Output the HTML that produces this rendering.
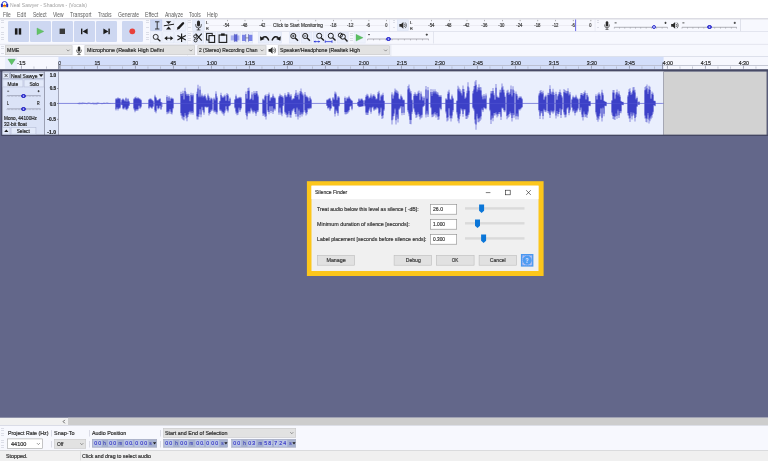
<!DOCTYPE html>
<html lang="en"><head><meta charset="utf-8"><title>Neal Sawyer - Shadows - (Vocals)</title>
<style>
html,body{margin:0;padding:0;}
body{width:768px;height:461px;overflow:hidden;background:#63678a;position:relative;font-family:"Liberation Sans",sans-serif;}
#app{position:absolute;left:0;top:0;width:768px;height:461px;overflow:hidden;will-change:transform;}
.b{position:absolute;box-sizing:border-box;}
.t{position:absolute;white-space:nowrap;display:block;-webkit-text-stroke:0.18px currentColor;}
.ns{-webkit-text-stroke:0;}
svg{position:absolute;left:0;top:0;overflow:visible;}
</style></head><body><div id="app">
<header id="titlebar-menubar">
<svg width="768" height="461" viewBox="0 0 768 461"><rect x="0.00" y="0.00" width="768.00" height="18.70" fill="#ffffff"/></svg>
<svg width="768" height="461" viewBox="0 0 768 461">
<g id="appicon">
<path d="M1.9 5.2 V4.2 A2.65 2.65 0 0 1 7.2 4.2 V5.2" fill="none" stroke="#2a3ad0" stroke-width="1.0"/>
<rect x="0.9" y="3.7" width="2.0" height="3.6" rx="0.8" fill="#1f2fc4"/>
<rect x="6.2" y="3.7" width="2.0" height="3.6" rx="0.8" fill="#1f2fc4"/>
<path d="M3 7 L3.4 4.4 L3.9 5 L4.5 2.9 L5.2 5 L5.7 4.4 L6.1 7 Z" fill="#ffd51e"/>
<rect x="3.1" y="5.0" width="2.9" height="0.9" fill="#e53a24"/>
<path d="M3.1 6.2 H6 L5.6 7.2 H3.5 Z" fill="#f59a1c"/>
</g></svg>
<span class="t ns" style="left:10.20px;top:1.95px;font-size:6px;line-height:6.90px;color:#a2a2a2;transform:scaleX(0.846);transform-origin:left center;">Neal Sawyer - Shadows - (Vocals)</span>
<span class="t ns" style="left:3.20px;top:10.76px;font-size:6.5px;line-height:7.47px;color:#5a5a5a;transform:scaleX(0.745);transform-origin:left center;">File</span>
<span class="t ns" style="left:17.00px;top:10.76px;font-size:6.5px;line-height:7.47px;color:#5a5a5a;transform:scaleX(0.804);transform-origin:left center;">Edit</span>
<span class="t ns" style="left:32.50px;top:10.76px;font-size:6.5px;line-height:7.47px;color:#5a5a5a;transform:scaleX(0.747);transform-origin:left center;">Select</span>
<span class="t ns" style="left:52.50px;top:10.76px;font-size:6.5px;line-height:7.47px;color:#5a5a5a;transform:scaleX(0.752);transform-origin:left center;">View</span>
<span class="t ns" style="left:69.50px;top:10.76px;font-size:6.5px;line-height:7.47px;color:#5a5a5a;transform:scaleX(0.780);transform-origin:left center;">Transport</span>
<span class="t ns" style="left:97.50px;top:10.76px;font-size:6.5px;line-height:7.47px;color:#5a5a5a;transform:scaleX(0.701);transform-origin:left center;">Tracks</span>
<span class="t ns" style="left:118.00px;top:10.76px;font-size:6.5px;line-height:7.47px;color:#5a5a5a;transform:scaleX(0.775);transform-origin:left center;">Generate</span>
<span class="t ns" style="left:145.00px;top:10.76px;font-size:6.5px;line-height:7.47px;color:#5a5a5a;transform:scaleX(0.806);transform-origin:left center;">Effect</span>
<span class="t ns" style="left:164.50px;top:10.76px;font-size:6.5px;line-height:7.47px;color:#5a5a5a;transform:scaleX(0.778);transform-origin:left center;">Analyze</span>
<span class="t ns" style="left:189.00px;top:10.76px;font-size:6.5px;line-height:7.47px;color:#5a5a5a;transform:scaleX(0.771);transform-origin:left center;">Tools</span>
<span class="t ns" style="left:207.00px;top:10.76px;font-size:6.5px;line-height:7.47px;color:#5a5a5a;transform:scaleX(0.800);transform-origin:left center;">Help</span>
</header>
<section id="transport-toolbar">
<svg width="768" height="461" viewBox="0 0 768 461"><rect x="0.00" y="18.60" width="768.00" height="38.10" fill="#f7f8fe"/><rect x="0.00" y="18.60" width="768.00" height="0.80" fill="#d8d8dd"/></svg>
<div class="b " style="left:0.00px;top:31.10px;width:768.00px;height:0.60px;background:#e3e5ef;left:188px;width:580px;"></div>
<svg width="768" height="461" viewBox="0 0 768 461"><rect x="0.00" y="43.90" width="768.00" height="0.70" fill="#dcdee8"/><rect x="0.00" y="56.20" width="768.00" height="0.60" fill="#d9dcea"/></svg>
<div class="b" style="left:1.4px;top:20px;width:2.6px;height:22px;background:repeating-linear-gradient(180deg,#c4c7d4 0 0.7px,transparent 0.7px 2.4px);opacity:.55"></div>
<div class="b " style="left:8.00px;top:21.00px;width:20.50px;height:20.60px;background:#cdd7f1;border-radius:1.2px;"></div>
<div class="b " style="left:30.00px;top:21.00px;width:20.50px;height:20.60px;background:#cdd7f1;border-radius:1.2px;"></div>
<div class="b " style="left:52.00px;top:21.00px;width:20.50px;height:20.60px;background:#cdd7f1;border-radius:1.2px;"></div>
<div class="b " style="left:74.00px;top:21.00px;width:20.50px;height:20.60px;background:#cdd7f1;border-radius:1.2px;"></div>
<div class="b " style="left:96.20px;top:21.00px;width:20.70px;height:20.60px;background:#cdd7f1;border-radius:1.2px;"></div>
<div class="b " style="left:122.00px;top:21.00px;width:20.80px;height:20.60px;background:#cdd7f1;border-radius:1.2px;"></div>
<svg width="768" height="461" viewBox="0 0 768 461">
<rect x="14.9" y="28.3" width="2.6" height="6.3" fill="#1b1b1b"/><rect x="18.7" y="28.3" width="2.5" height="6.3" fill="#1b1b1b"/>
<path d="M37 28 L43.8 31.4 L37 34.8 Z" fill="#64c468" stroke="#56ad5c" stroke-width="0.4"/>
<rect x="59.6" y="28.6" width="5.4" height="5.4" fill="#3a3a3a"/>
<rect x="81" y="28.6" width="1.4" height="5.6" fill="#1b1b1b"/><path d="M87.6 28.6 L82.6 31.4 L87.6 34.2 Z" fill="#1b1b1b"/>
<rect x="108.4" y="28.6" width="1.4" height="5.6" fill="#1b1b1b"/><path d="M103.4 28.6 L108.4 31.4 L103.4 34.2 Z" fill="#1b1b1b"/>
<circle cx="132.3" cy="31.3" r="2.9" fill="#e8403a"/></svg>
</section>
<section id="tools-toolbar">
<div class="b" style="left:146.3px;top:20px;width:2.6px;height:22px;background:repeating-linear-gradient(180deg,#c4c7d4 0 0.7px,transparent 0.7px 2.4px);opacity:.55"></div>
<svg width="768" height="461" viewBox="0 0 768 461"><rect x="150.65" y="19.85" width="11.30" height="10.70" fill="#ccd8f3" stroke="#b7c4e6" stroke-width="0.5"/><rect x="162.85" y="19.85" width="11.00" height="10.70" fill="#eef2fc" stroke="#dde3f3" stroke-width="0.5"/><rect x="174.75" y="19.85" width="11.20" height="10.70" fill="#eef2fc" stroke="#dde3f3" stroke-width="0.5"/><rect x="150.65" y="31.75" width="11.30" height="11.20" fill="#eef2fc" stroke="#dde3f3" stroke-width="0.5"/><rect x="162.85" y="31.75" width="11.00" height="11.20" fill="#eef2fc" stroke="#dde3f3" stroke-width="0.5"/><rect x="174.75" y="31.75" width="11.20" height="11.20" fill="#eef2fc" stroke="#dde3f3" stroke-width="0.5"/></svg>
<svg width="768" height="461" viewBox="0 0 768 461">
<path d="M155 21.8 H159.4 M157.2 21.8 V29 M155 29 H159.4" stroke="#1b1b1b" stroke-width="0.85" fill="none"/>
<path d="M163.8 25.8 L174 24.2" stroke="#1b1b1b" stroke-width="1.0" fill="none"/><path d="M166 21.2 H171.3 L168.6 23.9 Z" fill="#1b1b1b"/><path d="M166 29.5 H171.3 L168.6 26.4 Z" fill="#1b1b1b"/>
<path d="M176.8 29.8 L177.6 27.2 L182.2 22.4 L183.4 21.9 L184.3 23 L183.9 24.1 L179.3 28.9 Z" fill="#1b1b1b"/>
<circle cx="155.7" cy="36.9" r="2.5" fill="none" stroke="#1b1b1b" stroke-width="0.9"/><path d="M157.5 38.7 L160.4 41.2" stroke="#1b1b1b" stroke-width="1.3"/>
<path d="M166 38.2 H171.6" stroke="#1b1b1b" stroke-width="1.0"/><path d="M167.2 36 L164.3 38.2 L167.2 40.4 Z M170.4 36 L173.3 38.2 L170.4 40.4 Z" fill="#1b1b1b"/>
<path d="M181.6 33.5 V42 M177.4 35.6 L185.8 39.9 M185.8 35.6 L177.4 39.9" stroke="#1b1b1b" stroke-width="1.15"/></svg>
<svg width="768" height="461" viewBox="0 0 768 461"><rect x="187.20" y="19.00" width="0.50" height="37.50" fill="#dfe2ee"/></svg>
</section>
<section id="record-meter-toolbar">
<div class="b" style="left:188.4px;top:20px;width:2.6px;height:10.5px;background:repeating-linear-gradient(180deg,#c4c7d4 0 0.7px,transparent 0.7px 2.4px);opacity:.55"></div>
<svg width="768" height="461" viewBox="0 0 768 461"><rect x="192.75" y="19.85" width="11.50" height="10.70" fill="#e7edfb" stroke="#d8dff2" stroke-width="0.5"/></svg>
<svg width="768" height="461" viewBox="0 0 768 461"><g transform="translate(198.5,25.2) scale(1.12)"><rect x="-1.35" y="-4.3" width="2.7" height="5.4" rx="1.35" fill="#2a2a2a"/><path d="M-2.5 -0.9 V0 A2.5 2.5 0 0 0 2.5 0 V-0.9" fill="none" stroke="#2a2a2a" stroke-width="0.7"/><path d="M0 2.5 V4.2 M-1.6 4.2 H1.6" stroke="#2a2a2a" stroke-width="0.7"/></g></svg>
<span class="t " style="left:205.60px;top:19.87px;font-size:4.4px;line-height:5.06px;color:#333;transform:scaleX(0.981);transform-origin:left center;">L</span>
<span class="t " style="left:205.60px;top:25.67px;font-size:4.4px;line-height:5.06px;color:#333;transform:scaleX(0.850);transform-origin:left center;">R</span>
<svg width="768" height="461" viewBox="0 0 768 461"><rect x="209.00" y="25.20" width="178.00" height="0.60" fill="#e4e5ec"/><rect x="227.00" y="19.90" width="0.60" height="1.30" fill="#7a7a7a"/></svg>
<span class="t " style="left:223.38px;top:22.96px;font-size:4.6px;line-height:5.29px;color:#3a3a3a;transform:scaleX(0.903);transform-origin:center center;">-54</span>
<svg width="768" height="461" viewBox="0 0 768 461"><rect x="244.70" y="19.90" width="0.60" height="1.30" fill="#7a7a7a"/></svg>
<span class="t " style="left:241.08px;top:22.96px;font-size:4.6px;line-height:5.29px;color:#3a3a3a;transform:scaleX(0.903);transform-origin:center center;">-48</span>
<svg width="768" height="461" viewBox="0 0 768 461"><rect x="262.40" y="19.90" width="0.60" height="1.30" fill="#7a7a7a"/></svg>
<span class="t " style="left:258.78px;top:22.96px;font-size:4.6px;line-height:5.29px;color:#3a3a3a;transform:scaleX(0.903);transform-origin:center center;">-42</span>
<svg width="768" height="461" viewBox="0 0 768 461"><rect x="280.10" y="19.90" width="0.60" height="1.30" fill="#7a7a7a"/><rect x="297.80" y="19.90" width="0.60" height="1.30" fill="#7a7a7a"/><rect x="315.50" y="19.90" width="0.60" height="1.30" fill="#7a7a7a"/><rect x="333.20" y="19.90" width="0.60" height="1.30" fill="#7a7a7a"/></svg>
<span class="t " style="left:329.58px;top:22.96px;font-size:4.6px;line-height:5.29px;color:#3a3a3a;transform:scaleX(0.963);transform-origin:center center;">-18</span>
<svg width="768" height="461" viewBox="0 0 768 461"><rect x="350.90" y="19.90" width="0.60" height="1.30" fill="#7a7a7a"/></svg>
<span class="t " style="left:347.28px;top:22.96px;font-size:4.6px;line-height:5.29px;color:#3a3a3a;transform:scaleX(0.963);transform-origin:center center;">-12</span>
<svg width="768" height="461" viewBox="0 0 768 461"><rect x="368.60" y="19.90" width="0.60" height="1.30" fill="#7a7a7a"/></svg>
<span class="t " style="left:366.26px;top:22.96px;font-size:4.6px;line-height:5.29px;color:#3a3a3a;transform:scaleX(0.929);transform-origin:center center;">-6</span>
<svg width="768" height="461" viewBox="0 0 768 461"><rect x="386.30" y="19.90" width="0.60" height="1.30" fill="#7a7a7a"/></svg>
<span class="t " style="left:384.92px;top:22.96px;font-size:4.6px;line-height:5.29px;color:#3a3a3a;transform:scaleX(0.860);transform-origin:center center;">0</span>
<svg width="768" height="461" viewBox="0 0 768 461"><rect x="271.50" y="23.00" width="53.00" height="5.00" fill="#f7f8fe"/></svg>
<span class="t " style="left:273.00px;top:22.74px;font-size:4.8px;line-height:5.52px;color:#3c3c3c;transform:scaleX(0.981);transform-origin:left center;">Click to Start Monitoring</span>
<svg width="768" height="461" viewBox="0 0 768 461"><rect x="389.40" y="19.00" width="0.50" height="12.00" fill="#dfe2ee"/></svg>
</section>
<section id="playback-meter-toolbar">
<div class="b" style="left:392.6px;top:20px;width:2.6px;height:10.5px;background:repeating-linear-gradient(180deg,#c4c7d4 0 0.7px,transparent 0.7px 2.4px);opacity:.55"></div>
<svg width="768" height="461" viewBox="0 0 768 461"><rect x="397.25" y="19.85" width="11.10" height="10.70" fill="#e7edfb" stroke="#d8dff2" stroke-width="0.5"/></svg>
<svg width="768" height="461" viewBox="0 0 768 461"><g transform="translate(402.8,25.3) scale(0.95)"><path d="M-3.6 -1.4 H-1.8 L0.6 -3.6 V3.6 L-1.8 1.4 H-3.6 Z" fill="#2a2a2a"/><path d="M1.6 -1.7 A2.4 2.4 0 0 1 1.6 1.7" fill="none" stroke="#2a2a2a" stroke-width="0.7"/><path d="M2.5 -3 A4.2 4.2 0 0 1 2.5 3" fill="none" stroke="#2a2a2a" stroke-width="0.7"/></g></svg>
<span class="t " style="left:410.00px;top:19.87px;font-size:4.4px;line-height:5.06px;color:#333;transform:scaleX(0.981);transform-origin:left center;">L</span>
<span class="t " style="left:410.00px;top:25.67px;font-size:4.4px;line-height:5.06px;color:#333;transform:scaleX(0.850);transform-origin:left center;">R</span>
<svg width="768" height="461" viewBox="0 0 768 461"><rect x="414.00" y="25.20" width="178.00" height="0.60" fill="#e4e5ec"/><rect x="431.30" y="19.90" width="0.60" height="1.30" fill="#7a7a7a"/></svg>
<span class="t " style="left:427.68px;top:22.96px;font-size:4.6px;line-height:5.29px;color:#3a3a3a;transform:scaleX(0.933);transform-origin:center center;">-54</span>
<svg width="768" height="461" viewBox="0 0 768 461"><rect x="449.00" y="19.90" width="0.60" height="1.30" fill="#7a7a7a"/></svg>
<span class="t " style="left:445.38px;top:22.96px;font-size:4.6px;line-height:5.29px;color:#3a3a3a;transform:scaleX(0.933);transform-origin:center center;">-48</span>
<svg width="768" height="461" viewBox="0 0 768 461"><rect x="466.70" y="19.90" width="0.60" height="1.30" fill="#7a7a7a"/></svg>
<span class="t " style="left:463.08px;top:22.96px;font-size:4.6px;line-height:5.29px;color:#3a3a3a;transform:scaleX(0.933);transform-origin:center center;">-42</span>
<svg width="768" height="461" viewBox="0 0 768 461"><rect x="484.40" y="19.90" width="0.60" height="1.30" fill="#7a7a7a"/></svg>
<span class="t " style="left:480.78px;top:22.96px;font-size:4.6px;line-height:5.29px;color:#3a3a3a;transform:scaleX(0.933);transform-origin:center center;">-36</span>
<svg width="768" height="461" viewBox="0 0 768 461"><rect x="502.10" y="19.90" width="0.60" height="1.30" fill="#7a7a7a"/></svg>
<span class="t " style="left:498.48px;top:22.96px;font-size:4.6px;line-height:5.29px;color:#3a3a3a;transform:scaleX(0.933);transform-origin:center center;">-30</span>
<svg width="768" height="461" viewBox="0 0 768 461"><rect x="519.80" y="19.90" width="0.60" height="1.30" fill="#7a7a7a"/></svg>
<span class="t " style="left:516.18px;top:22.96px;font-size:4.6px;line-height:5.29px;color:#3a3a3a;transform:scaleX(0.933);transform-origin:center center;">-24</span>
<svg width="768" height="461" viewBox="0 0 768 461"><rect x="537.50" y="19.90" width="0.60" height="1.30" fill="#7a7a7a"/></svg>
<span class="t " style="left:533.88px;top:22.96px;font-size:4.6px;line-height:5.29px;color:#3a3a3a;transform:scaleX(0.933);transform-origin:center center;">-18</span>
<svg width="768" height="461" viewBox="0 0 768 461"><rect x="555.20" y="19.90" width="0.60" height="1.30" fill="#7a7a7a"/></svg>
<span class="t " style="left:551.58px;top:22.96px;font-size:4.6px;line-height:5.29px;color:#3a3a3a;transform:scaleX(0.933);transform-origin:center center;">-12</span>
<svg width="768" height="461" viewBox="0 0 768 461"><rect x="572.90" y="19.90" width="0.60" height="1.30" fill="#7a7a7a"/></svg>
<span class="t " style="left:570.56px;top:22.96px;font-size:4.6px;line-height:5.29px;color:#3a3a3a;transform:scaleX(0.929);transform-origin:center center;">-6</span>
<svg width="768" height="461" viewBox="0 0 768 461"><rect x="590.60" y="19.90" width="0.60" height="1.30" fill="#7a7a7a"/></svg>
<span class="t " style="left:589.22px;top:22.96px;font-size:4.6px;line-height:5.29px;color:#3a3a3a;transform:scaleX(0.860);transform-origin:center center;">0</span>
<svg width="768" height="461" viewBox="0 0 768 461"><rect x="575.20" y="19.50" width="0.90" height="11.60" fill="#5a5ae6"/><rect x="594.80" y="19.00" width="0.50" height="12.00" fill="#dfe2ee"/></svg>
</section>
<section id="mixer-toolbar">
<div class="b" style="left:596.6px;top:20px;width:2.6px;height:10.5px;background:repeating-linear-gradient(180deg,#c4c7d4 0 0.7px,transparent 0.7px 2.4px);opacity:.55"></div>
<svg width="768" height="461" viewBox="0 0 768 461"><g transform="translate(607,25.4) scale(0.95)"><rect x="-1.35" y="-4.3" width="2.7" height="5.4" rx="1.35" fill="#2a2a2a"/><path d="M-2.5 -0.9 V0 A2.5 2.5 0 0 0 2.5 0 V-0.9" fill="none" stroke="#2a2a2a" stroke-width="0.7"/><path d="M0 2.5 V4.2 M-1.6 4.2 H1.6" stroke="#2a2a2a" stroke-width="0.7"/></g><g transform="translate(674.6,25.4) scale(0.95)"><path d="M-3.6 -1.4 H-1.8 L0.6 -3.6 V3.6 L-1.8 1.4 H-3.6 Z" fill="#2a2a2a"/><path d="M1.6 -1.7 A2.4 2.4 0 0 1 1.6 1.7" fill="none" stroke="#2a2a2a" stroke-width="0.7"/><path d="M2.5 -3 A4.2 4.2 0 0 1 2.5 3" fill="none" stroke="#2a2a2a" stroke-width="0.7"/></g></svg>
<svg width="768" height="461" viewBox="0 0 768 461"><rect x="614.20" y="26.85" width="53.20" height="0.70" fill="#93939b"/><rect x="613.90" y="27.20" width="0.60" height="1.40" fill="#9a9aa2"/><rect x="619.22" y="27.20" width="0.60" height="1.40" fill="#9a9aa2"/><rect x="624.54" y="27.20" width="0.60" height="1.40" fill="#9a9aa2"/><rect x="629.86" y="27.20" width="0.60" height="1.40" fill="#9a9aa2"/><rect x="635.18" y="27.20" width="0.60" height="1.40" fill="#9a9aa2"/><rect x="640.50" y="27.20" width="0.60" height="1.40" fill="#9a9aa2"/><rect x="645.82" y="27.20" width="0.60" height="1.40" fill="#9a9aa2"/><rect x="651.14" y="27.20" width="0.60" height="1.40" fill="#9a9aa2"/><rect x="656.46" y="27.20" width="0.60" height="1.40" fill="#9a9aa2"/><rect x="661.78" y="27.20" width="0.60" height="1.40" fill="#9a9aa2"/><rect x="667.10" y="27.20" width="0.60" height="1.40" fill="#9a9aa2"/><rect x="614.60" y="22.50" width="2.00" height="0.80" fill="#2a2a2a"/><rect x="664.40" y="22.50" width="2.20" height="0.80" fill="#2a2a2a"/><rect x="665.10" y="21.80" width="0.80" height="2.20" fill="#2a2a2a"/></svg>
<div class="b" style="left:651.8px;top:25.0px;width:4.4px;height:4.4px;border-radius:50%;background:#4a4ae2;border:0.5px solid #3a3ad0"></div>
<div class="b" style="left:653.2px;top:26.4px;width:1.6px;height:1.6px;border-radius:50%;background:#a8aef4"></div>
<svg width="768" height="461" viewBox="0 0 768 461"><rect x="682.00" y="26.85" width="54.70" height="0.70" fill="#93939b"/><rect x="681.70" y="27.20" width="0.60" height="1.40" fill="#9a9aa2"/><rect x="687.17" y="27.20" width="0.60" height="1.40" fill="#9a9aa2"/><rect x="692.64" y="27.20" width="0.60" height="1.40" fill="#9a9aa2"/><rect x="698.11" y="27.20" width="0.60" height="1.40" fill="#9a9aa2"/><rect x="703.58" y="27.20" width="0.60" height="1.40" fill="#9a9aa2"/><rect x="709.05" y="27.20" width="0.60" height="1.40" fill="#9a9aa2"/><rect x="714.52" y="27.20" width="0.60" height="1.40" fill="#9a9aa2"/><rect x="719.99" y="27.20" width="0.60" height="1.40" fill="#9a9aa2"/><rect x="725.46" y="27.20" width="0.60" height="1.40" fill="#9a9aa2"/><rect x="730.93" y="27.20" width="0.60" height="1.40" fill="#9a9aa2"/><rect x="736.40" y="27.20" width="0.60" height="1.40" fill="#9a9aa2"/><rect x="682.40" y="22.50" width="2.00" height="0.80" fill="#2a2a2a"/><rect x="733.70" y="22.50" width="2.20" height="0.80" fill="#2a2a2a"/><rect x="734.40" y="21.80" width="0.80" height="2.20" fill="#2a2a2a"/></svg>
<div class="b" style="left:707.1999999999999px;top:25.0px;width:4.4px;height:4.4px;border-radius:50%;background:#4a4ae2;border:0.5px solid #3a3ad0"></div>
<div class="b" style="left:708.6px;top:26.4px;width:1.6px;height:1.6px;border-radius:50%;background:#a8aef4"></div>
<svg width="768" height="461" viewBox="0 0 768 461"><rect x="740.00" y="19.00" width="0.60" height="12.20" fill="#cfd2de"/></svg>
</section>
<section id="edit-toolbar">
<div class="b" style="left:188.4px;top:32.6px;width:2.6px;height:10px;background:repeating-linear-gradient(180deg,#c4c7d4 0 0.7px,transparent 0.7px 2.4px);opacity:.55"></div>
<svg width="768" height="461" viewBox="0 0 768 461"><rect x="354.05" y="32.05" width="11.10" height="11.00" fill="#eef2fc" stroke="#e0e6f5" stroke-width="0.5"/><rect x="193.05" y="32.05" width="10.70" height="11.00" fill="#e9eefb" stroke="#dbe2f3" stroke-width="0.5"/><rect x="205.25" y="32.05" width="10.70" height="11.00" fill="#e9eefb" stroke="#dbe2f3" stroke-width="0.5"/><rect x="217.45" y="32.05" width="10.70" height="11.00" fill="#e9eefb" stroke="#dbe2f3" stroke-width="0.5"/><rect x="229.85" y="32.05" width="10.70" height="11.00" fill="#e9eefb" stroke="#dbe2f3" stroke-width="0.5"/><rect x="242.05" y="32.05" width="10.70" height="11.00" fill="#e9eefb" stroke="#dbe2f3" stroke-width="0.5"/><rect x="258.25" y="32.05" width="10.90" height="11.00" fill="#e9eefb" stroke="#dbe2f3" stroke-width="0.5"/><rect x="270.65" y="32.05" width="10.90" height="11.00" fill="#e9eefb" stroke="#dbe2f3" stroke-width="0.5"/><rect x="289.45" y="32.05" width="10.50" height="11.00" fill="#e9eefb" stroke="#dbe2f3" stroke-width="0.5"/><rect x="301.25" y="32.05" width="10.70" height="11.00" fill="#e9eefb" stroke="#dbe2f3" stroke-width="0.5"/><rect x="313.25" y="32.05" width="10.70" height="11.00" fill="#e9eefb" stroke="#dbe2f3" stroke-width="0.5"/><rect x="325.25" y="32.05" width="10.70" height="11.00" fill="#e9eefb" stroke="#dbe2f3" stroke-width="0.5"/><rect x="337.25" y="32.05" width="10.90" height="11.00" fill="#e9eefb" stroke="#dbe2f3" stroke-width="0.5"/></svg>
<svg width="768" height="461" viewBox="0 0 768 461">
<path d="M195.6 33.6 L201.8 40.6 M201.8 33.6 L196.8 39.2" stroke="#1b1b1b" stroke-width="1.1"/><circle cx="195.6" cy="40.4" r="1.5" fill="none" stroke="#1b1b1b" stroke-width="0.9"/><circle cx="195.2" cy="36.4" r="1.5" fill="none" stroke="#1b1b1b" stroke-width="0.9"/>
<rect x="206.6" y="33.4" width="5.6" height="6.6" fill="none" stroke="#1b1b1b" stroke-width="1.0"/><rect x="209" y="35.6" width="5.6" height="6.8" fill="#e9eefb" stroke="#1b1b1b" stroke-width="1.1"/>
<rect x="219.1" y="35" width="7.6" height="7.4" fill="none" stroke="#1b1b1b" stroke-width="1.1"/><rect x="221.1" y="33.4" width="3.6" height="2.2" fill="#1b1b1b"/>
<rect x="230.8" y="35.4" width="8.6" height="5" fill="#98a1ee" opacity=".8"/><rect x="234.4" y="34.4" width="2.6" height="7" fill="#5a64de"/><path d="M234.4 33.8 V42 M237 33.8 V42" stroke="#3a3f9a" stroke-width="0.5"/>
<rect x="242" y="34.8" width="3.6" height="6.2" fill="#7a84e8"/><rect x="248.6" y="34.8" width="3.8" height="6.2" fill="#7a84e8"/><path d="M245.6 37.9 H248.6" stroke="#444" stroke-width="0.5"/><path d="M245.7 34 V41.8 M248.5 34 V41.8" stroke="#3a3f9a" stroke-width="0.5"/>
<path d="M262 38.8 C263.4 36 267 35.6 268.8 40.4" fill="none" stroke="#1b1b1b" stroke-width="1.35"/><path d="M260 36.2 L260.4 40.8 L264.6 39 Z" fill="#1b1b1b"/>
<path d="M278.8 38.8 C277.4 36 273.8 35.6 272 40.4" fill="none" stroke="#1b1b1b" stroke-width="1.35"/><path d="M280.8 36.2 L280.4 40.8 L276.2 39 Z" fill="#1b1b1b"/>
<circle cx="293.3" cy="36" r="2.55" fill="none" stroke="#1b1b1b" stroke-width="1.0"/><path d="M295.2 37.9 L298.0 40.8" stroke="#1b1b1b" stroke-width="1.4"/><path d="M292 36 H294.6 M293.3 34.7 V37.3" stroke="#1b1b1b" stroke-width="0.7"/>
<circle cx="305.2" cy="36" r="2.55" fill="none" stroke="#1b1b1b" stroke-width="1.0"/><path d="M307.09999999999997 37.9 L309.9 40.8" stroke="#1b1b1b" stroke-width="1.4"/><path d="M303.9 36 H306.5" stroke="#1b1b1b" stroke-width="0.7"/>
<circle cx="319.2" cy="35.8" r="2.55" fill="none" stroke="#1b1b1b" stroke-width="1.0"/><path d="M321.09999999999997 37.699999999999996 L323.9 40.599999999999994" stroke="#1b1b1b" stroke-width="1.4"/><path d="M314.2 41.6 H319.4" stroke="#2b35d8" stroke-width="0.8"/><path d="M315.4 40.5 L313.6 41.6 L315.4 42.7 Z M318.4 40.5 L320.2 41.6 L318.4 42.7 Z" fill="#2b35d8"/>
<circle cx="330.8" cy="35.8" r="2.55" fill="none" stroke="#1b1b1b" stroke-width="1.0"/><path d="M332.7 37.699999999999996 L335.5 40.599999999999994" stroke="#1b1b1b" stroke-width="1.4"/><path d="M325.2 41.6 H332 M325.2 40.3 V42.9 M332 40.3 V42.9" stroke="#2b35d8" stroke-width="0.8"/>
<circle cx="342.8" cy="36.6" r="2.55" fill="none" stroke="#1b1b1b" stroke-width="1.0"/><path d="M344.7 38.5 L347.5 41.4" stroke="#1b1b1b" stroke-width="1.4"/><circle cx="340.4" cy="35.2" r="2.1" fill="none" stroke="#1b1b1b" stroke-width="0.9"/>
<path d="M356 34.3 L363.1 37.7 L356 41.1 Z" fill="#5bbf62" stroke="#46a550" stroke-width="0.3"/></svg>
<div class="b" style="left:350.4px;top:32.6px;width:2.6px;height:10px;background:repeating-linear-gradient(180deg,#c4c7d4 0 0.7px,transparent 0.7px 2.4px);opacity:.55"></div>
<svg width="768" height="461" viewBox="0 0 768 461"><rect x="367.60" y="38.65" width="61.10" height="0.70" fill="#93939b"/><rect x="367.30" y="39.00" width="0.60" height="1.40" fill="#9a9aa2"/><rect x="373.41" y="39.00" width="0.60" height="1.40" fill="#9a9aa2"/><rect x="379.52" y="39.00" width="0.60" height="1.40" fill="#9a9aa2"/><rect x="385.63" y="39.00" width="0.60" height="1.40" fill="#9a9aa2"/><rect x="391.74" y="39.00" width="0.60" height="1.40" fill="#9a9aa2"/><rect x="397.85" y="39.00" width="0.60" height="1.40" fill="#9a9aa2"/><rect x="403.96" y="39.00" width="0.60" height="1.40" fill="#9a9aa2"/><rect x="410.07" y="39.00" width="0.60" height="1.40" fill="#9a9aa2"/><rect x="416.18" y="39.00" width="0.60" height="1.40" fill="#9a9aa2"/><rect x="422.29" y="39.00" width="0.60" height="1.40" fill="#9a9aa2"/><rect x="428.40" y="39.00" width="0.60" height="1.40" fill="#9a9aa2"/><rect x="368.00" y="34.30" width="2.00" height="0.80" fill="#2a2a2a"/><rect x="425.70" y="34.30" width="2.20" height="0.80" fill="#2a2a2a"/><rect x="426.40" y="33.60" width="0.80" height="2.20" fill="#2a2a2a"/></svg>
<div class="b" style="left:386.3px;top:36.8px;width:4.4px;height:4.4px;border-radius:50%;background:#4a4ae2;border:0.5px solid #3a3ad0"></div>
<div class="b" style="left:387.7px;top:38.2px;width:1.6px;height:1.6px;border-radius:50%;background:#a8aef4"></div>
<svg width="768" height="461" viewBox="0 0 768 461"><rect x="433.00" y="31.50" width="0.60" height="12.00" fill="#d6d9e5"/></svg>
</section>
<section id="device-toolbar">
<div class="b" style="left:1.4px;top:45.6px;width:2.6px;height:9.6px;background:repeating-linear-gradient(180deg,#c4c7d4 0 0.7px,transparent 0.7px 2.4px);opacity:.55"></div>
<svg width="768" height="461" viewBox="0 0 768 461"><rect x="5.30" y="45.70" width="66.80" height="9.00" fill="#e2e2e2" stroke="#c6c6c6" stroke-width="0.6"/></svg>
<span class="t " style="left:7.20px;top:47.08px;font-size:5.6px;line-height:6.44px;color:#2a2a2a;transform:scaleX(0.941);transform-origin:left center;">MME</span>
<svg width="768" height="461" viewBox="0 0 768 461"><path d="M66.7 49.6 L68.2 51.1 L69.7 49.6" fill="none" stroke="#555" stroke-width="0.6"/></svg>
<svg width="768" height="461" viewBox="0 0 768 461"><rect x="73.40" y="45.00" width="10.20" height="11.00" fill="#ffffff"/><rect x="267.00" y="45.00" width="9.80" height="11.00" fill="#ffffff"/></svg>
<svg width="768" height="461" viewBox="0 0 768 461"><g transform="translate(79,50.6) scale(0.95)"><rect x="-1.35" y="-4.3" width="2.7" height="5.4" rx="1.35" fill="#2a2a2a"/><path d="M-2.5 -0.9 V0 A2.5 2.5 0 0 0 2.5 0 V-0.9" fill="none" stroke="#2a2a2a" stroke-width="0.7"/><path d="M0 2.5 V4.2 M-1.6 4.2 H1.6" stroke="#2a2a2a" stroke-width="0.7"/></g><g transform="translate(272,50.4) scale(0.95)"><path d="M-3.6 -1.4 H-1.8 L0.6 -3.6 V3.6 L-1.8 1.4 H-3.6 Z" fill="#2a2a2a"/><path d="M1.6 -1.7 A2.4 2.4 0 0 1 1.6 1.7" fill="none" stroke="#2a2a2a" stroke-width="0.7"/><path d="M2.5 -3 A4.2 4.2 0 0 1 2.5 3" fill="none" stroke="#2a2a2a" stroke-width="0.7"/></g></svg>
<svg width="768" height="461" viewBox="0 0 768 461"><rect x="84.90" y="45.70" width="109.80" height="9.00" fill="#e2e2e2" stroke="#c6c6c6" stroke-width="0.6"/></svg>
<span class="t " style="left:86.60px;top:47.08px;font-size:5.6px;line-height:6.44px;color:#2a2a2a;transform:scaleX(0.954);transform-origin:left center;">Microphone (Realtek High Defini</span>
<svg width="768" height="461" viewBox="0 0 768 461"><path d="M189.3 49.6 L190.8 51.1 L192.3 49.6" fill="none" stroke="#555" stroke-width="0.6"/></svg>
<svg width="768" height="461" viewBox="0 0 768 461"><rect x="197.80" y="45.70" width="68.20" height="9.00" fill="#e2e2e2" stroke="#c6c6c6" stroke-width="0.6"/></svg>
<span class="t " style="left:199.40px;top:47.08px;font-size:5.6px;line-height:6.44px;color:#2a2a2a;transform:scaleX(0.876);transform-origin:left center;">2 (Stereo) Recording Chan</span>
<svg width="768" height="461" viewBox="0 0 768 461"><path d="M260.6 49.6 L262.1 51.1 L263.6 49.6" fill="none" stroke="#555" stroke-width="0.6"/></svg>
<svg width="768" height="461" viewBox="0 0 768 461"><rect x="278.30" y="45.70" width="111.20" height="9.00" fill="#e2e2e2" stroke="#c6c6c6" stroke-width="0.6"/></svg>
<span class="t " style="left:279.80px;top:47.08px;font-size:5.6px;line-height:6.44px;color:#2a2a2a;transform:scaleX(0.923);transform-origin:left center;">Speaker/Headphone (Realtek High</span>
<svg width="768" height="461" viewBox="0 0 768 461"><path d="M384.1 49.6 L385.6 51.1 L387.1 49.6" fill="none" stroke="#555" stroke-width="0.6"/></svg>
<svg width="768" height="461" viewBox="0 0 768 461"><rect x="390.60" y="44.60" width="0.60" height="11.60" fill="#d6d9e5"/></svg>
</section>
<section id="timeline-ruler">
<svg width="768" height="461" viewBox="0 0 768 461"><rect x="0.00" y="56.70" width="768.00" height="13.40" fill="#f6f7fe"/><rect x="58.40" y="56.90" width="605.20" height="12.40" fill="#d3defa"/><rect x="5.00" y="57.20" width="12.00" height="11.80" fill="#e9eefc"/><rect x="58.40" y="65.00" width="710.00" height="0.70" fill="#b0b3c2"/><rect x="20.95" y="65.60" width="0.70" height="3.10" fill="#85889a"/><rect x="33.67" y="66.50" width="0.60" height="2.20" fill="#a3a6b6"/><rect x="46.33" y="66.50" width="0.60" height="2.20" fill="#a3a6b6"/><rect x="58.95" y="65.60" width="0.70" height="3.10" fill="#85889a"/><rect x="71.67" y="66.50" width="0.60" height="2.20" fill="#a3a6b6"/><rect x="84.33" y="66.50" width="0.60" height="2.20" fill="#a3a6b6"/><rect x="96.95" y="65.60" width="0.70" height="3.10" fill="#85889a"/><rect x="109.67" y="66.50" width="0.60" height="2.20" fill="#a3a6b6"/><rect x="122.33" y="66.50" width="0.60" height="2.20" fill="#a3a6b6"/><rect x="134.95" y="65.60" width="0.70" height="3.10" fill="#85889a"/><rect x="147.67" y="66.50" width="0.60" height="2.20" fill="#a3a6b6"/><rect x="160.33" y="66.50" width="0.60" height="2.20" fill="#a3a6b6"/><rect x="172.95" y="65.60" width="0.70" height="3.10" fill="#85889a"/><rect x="185.67" y="66.50" width="0.60" height="2.20" fill="#a3a6b6"/><rect x="198.33" y="66.50" width="0.60" height="2.20" fill="#a3a6b6"/><rect x="210.95" y="65.60" width="0.70" height="3.10" fill="#85889a"/><rect x="223.67" y="66.50" width="0.60" height="2.20" fill="#a3a6b6"/><rect x="236.33" y="66.50" width="0.60" height="2.20" fill="#a3a6b6"/><rect x="248.95" y="65.60" width="0.70" height="3.10" fill="#85889a"/><rect x="261.67" y="66.50" width="0.60" height="2.20" fill="#a3a6b6"/><rect x="274.33" y="66.50" width="0.60" height="2.20" fill="#a3a6b6"/><rect x="286.95" y="65.60" width="0.70" height="3.10" fill="#85889a"/><rect x="299.67" y="66.50" width="0.60" height="2.20" fill="#a3a6b6"/><rect x="312.33" y="66.50" width="0.60" height="2.20" fill="#a3a6b6"/><rect x="324.95" y="65.60" width="0.70" height="3.10" fill="#85889a"/><rect x="337.67" y="66.50" width="0.60" height="2.20" fill="#a3a6b6"/><rect x="350.33" y="66.50" width="0.60" height="2.20" fill="#a3a6b6"/><rect x="362.95" y="65.60" width="0.70" height="3.10" fill="#85889a"/><rect x="375.67" y="66.50" width="0.60" height="2.20" fill="#a3a6b6"/><rect x="388.33" y="66.50" width="0.60" height="2.20" fill="#a3a6b6"/><rect x="400.95" y="65.60" width="0.70" height="3.10" fill="#85889a"/><rect x="413.67" y="66.50" width="0.60" height="2.20" fill="#a3a6b6"/><rect x="426.33" y="66.50" width="0.60" height="2.20" fill="#a3a6b6"/><rect x="438.95" y="65.60" width="0.70" height="3.10" fill="#85889a"/><rect x="451.67" y="66.50" width="0.60" height="2.20" fill="#a3a6b6"/><rect x="464.33" y="66.50" width="0.60" height="2.20" fill="#a3a6b6"/><rect x="476.95" y="65.60" width="0.70" height="3.10" fill="#85889a"/><rect x="489.67" y="66.50" width="0.60" height="2.20" fill="#a3a6b6"/><rect x="502.33" y="66.50" width="0.60" height="2.20" fill="#a3a6b6"/><rect x="514.95" y="65.60" width="0.70" height="3.10" fill="#85889a"/><rect x="527.67" y="66.50" width="0.60" height="2.20" fill="#a3a6b6"/><rect x="540.33" y="66.50" width="0.60" height="2.20" fill="#a3a6b6"/><rect x="552.95" y="65.60" width="0.70" height="3.10" fill="#85889a"/><rect x="565.67" y="66.50" width="0.60" height="2.20" fill="#a3a6b6"/><rect x="578.33" y="66.50" width="0.60" height="2.20" fill="#a3a6b6"/><rect x="590.95" y="65.60" width="0.70" height="3.10" fill="#85889a"/><rect x="603.67" y="66.50" width="0.60" height="2.20" fill="#a3a6b6"/><rect x="616.33" y="66.50" width="0.60" height="2.20" fill="#a3a6b6"/><rect x="628.95" y="65.60" width="0.70" height="3.10" fill="#85889a"/><rect x="641.67" y="66.50" width="0.60" height="2.20" fill="#a3a6b6"/><rect x="654.33" y="66.50" width="0.60" height="2.20" fill="#a3a6b6"/><rect x="666.95" y="65.60" width="0.70" height="3.10" fill="#85889a"/><rect x="679.67" y="66.50" width="0.60" height="2.20" fill="#a3a6b6"/><rect x="692.33" y="66.50" width="0.60" height="2.20" fill="#a3a6b6"/><rect x="704.95" y="65.60" width="0.70" height="3.10" fill="#85889a"/><rect x="717.67" y="66.50" width="0.60" height="2.20" fill="#a3a6b6"/><rect x="730.33" y="66.50" width="0.60" height="2.20" fill="#a3a6b6"/><rect x="742.95" y="65.60" width="0.70" height="3.10" fill="#85889a"/><rect x="755.67" y="66.50" width="0.60" height="2.20" fill="#a3a6b6"/></svg>
<span class="t " style="left:17.20px;top:59.95px;font-size:6px;line-height:6.90px;color:#1c1c1c;transform:scaleX(0.992);transform-origin:left center;">-15</span>
<span class="t " style="left:57.73px;top:59.95px;font-size:6px;line-height:6.90px;color:#1c1c1c;transform:scaleX(0.839);transform-origin:center center;">0</span>
<span class="t " style="left:94.06px;top:59.95px;font-size:6px;line-height:6.90px;color:#1c1c1c;transform:scaleX(0.869);transform-origin:center center;">15</span>
<span class="t " style="left:132.06px;top:59.95px;font-size:6px;line-height:6.90px;color:#1c1c1c;transform:scaleX(0.869);transform-origin:center center;">30</span>
<span class="t " style="left:170.06px;top:59.95px;font-size:6px;line-height:6.90px;color:#1c1c1c;transform:scaleX(0.869);transform-origin:center center;">45</span>
<span class="t " style="left:205.56px;top:59.95px;font-size:6px;line-height:6.90px;color:#1c1c1c;transform:scaleX(0.874);transform-origin:center center;">1:00</span>
<span class="t " style="left:243.56px;top:59.95px;font-size:6px;line-height:6.90px;color:#1c1c1c;transform:scaleX(0.874);transform-origin:center center;">1:15</span>
<span class="t " style="left:281.56px;top:59.95px;font-size:6px;line-height:6.90px;color:#1c1c1c;transform:scaleX(0.874);transform-origin:center center;">1:30</span>
<span class="t " style="left:319.56px;top:59.95px;font-size:6px;line-height:6.90px;color:#1c1c1c;transform:scaleX(0.874);transform-origin:center center;">1:45</span>
<span class="t " style="left:357.56px;top:59.95px;font-size:6px;line-height:6.90px;color:#1c1c1c;transform:scaleX(0.874);transform-origin:center center;">2:00</span>
<span class="t " style="left:395.56px;top:59.95px;font-size:6px;line-height:6.90px;color:#1c1c1c;transform:scaleX(0.874);transform-origin:center center;">2:15</span>
<span class="t " style="left:433.56px;top:59.95px;font-size:6px;line-height:6.90px;color:#1c1c1c;transform:scaleX(0.874);transform-origin:center center;">2:30</span>
<span class="t " style="left:471.56px;top:59.95px;font-size:6px;line-height:6.90px;color:#1c1c1c;transform:scaleX(0.874);transform-origin:center center;">2:45</span>
<span class="t " style="left:509.56px;top:59.95px;font-size:6px;line-height:6.90px;color:#1c1c1c;transform:scaleX(0.874);transform-origin:center center;">3:00</span>
<span class="t " style="left:547.56px;top:59.95px;font-size:6px;line-height:6.90px;color:#1c1c1c;transform:scaleX(0.874);transform-origin:center center;">3:15</span>
<span class="t " style="left:585.56px;top:59.95px;font-size:6px;line-height:6.90px;color:#1c1c1c;transform:scaleX(0.874);transform-origin:center center;">3:30</span>
<span class="t " style="left:623.56px;top:59.95px;font-size:6px;line-height:6.90px;color:#1c1c1c;transform:scaleX(0.874);transform-origin:center center;">3:45</span>
<span class="t " style="left:661.56px;top:59.95px;font-size:6px;line-height:6.90px;color:#1c1c1c;transform:scaleX(0.874);transform-origin:center center;">4:00</span>
<span class="t " style="left:699.56px;top:59.95px;font-size:6px;line-height:6.90px;color:#1c1c1c;transform:scaleX(0.874);transform-origin:center center;">4:15</span>
<span class="t " style="left:737.56px;top:59.95px;font-size:6px;line-height:6.90px;color:#1c1c1c;transform:scaleX(0.874);transform-origin:center center;">4:30</span>
<svg width="768" height="461" viewBox="0 0 768 461"><rect x="58.20" y="62.00" width="0.70" height="7.50" fill="#777a8c"/><rect x="60.30" y="62.50" width="0.60" height="7.00" fill="#9a9cac"/><rect x="662.00" y="62.40" width="0.70" height="7.00" fill="#777a8c"/></svg>
<svg width="768" height="461" viewBox="0 0 768 461"><path d="M8.2 59.3 H15.1 L11.65 64.6 Z" fill="#5ec466" stroke="#4aa455" stroke-width="0.6" stroke-linejoin="round"/></svg>
</section>
<section id="track-area">
<svg width="768" height="461" viewBox="0 0 768 461"><rect x="0.00" y="69.20" width="768.00" height="2.40" fill="#484b66"/><rect x="2.20" y="71.60" width="765.00" height="63.30" fill="#d2d2d2"/><rect x="58.40" y="71.60" width="605.20" height="63.30" fill="#eaeffd"/><rect x="663.20" y="71.60" width="0.60" height="63.30" fill="#7d7f90"/><rect x="2.20" y="71.60" width="42.40" height="63.30" fill="#dbe3f7"/><rect x="44.60" y="71.60" width="13.80" height="63.30" fill="#dfe7fa"/><rect x="44.30" y="71.60" width="0.70" height="63.30" fill="#80849a"/><rect x="58.00" y="71.60" width="0.70" height="63.30" fill="#8a8ea4"/><rect x="1.50" y="134.70" width="766.50" height="1.10" fill="#3c3f58"/><rect x="1.40" y="70.00" width="0.90" height="65.60" fill="#3c3f58"/><rect x="766.60" y="70.00" width="1.00" height="66.00" fill="#484b66"/></svg>
</section>
<section id="track-panel">
<svg width="768" height="461" viewBox="0 0 768 461"><rect x="2.65" y="72.45" width="6.70" height="6.10" fill="#e3eafa" stroke="#8f96b0" stroke-width="0.5"/><rect x="10.25" y="72.45" width="33.70" height="6.10" fill="#e3eafa" stroke="#8f96b0" stroke-width="0.5"/></svg>
<span class="t " style="left:11.40px;top:72.51px;font-size:5.2px;line-height:5.98px;color:#222;transform:scaleX(0.959);transform-origin:left center;">Neal Sawye</span>
<svg width="768" height="461" viewBox="0 0 768 461"><path d="M4.6 73.9 L7.6 77.1 M7.6 73.9 L4.6 77.1" stroke="#1b1b1b" stroke-width="0.7"/><path d="M38.8 74.2 H43.4 L41.1 77 Z" fill="#1b1b1b"/></svg>
<svg width="768" height="461" viewBox="0 0 768 461"><rect x="2.85" y="79.85" width="20.10" height="7.10" fill="#e3eafa" stroke="#aeb6d0" stroke-width="0.5"/><rect x="24.05" y="79.85" width="19.90" height="7.10" fill="#e3eafa" stroke="#aeb6d0" stroke-width="0.5"/></svg>
<span class="t " style="left:7.22px;top:80.51px;font-size:5.2px;line-height:5.98px;color:#222;transform:scaleX(0.917);transform-origin:center center;">Mute</span>
<span class="t " style="left:28.80px;top:80.51px;font-size:5.2px;line-height:5.98px;color:#222;transform:scaleX(0.922);transform-origin:center center;">Solo</span>
<svg width="768" height="461" viewBox="0 0 768 461"><rect x="7.00" y="95.30" width="33.60" height="0.70" fill="#9a9eb2"/><rect x="6.75" y="95.60" width="0.50" height="1.30" fill="#a4a8bc"/><rect x="8.15" y="95.60" width="0.50" height="1.30" fill="#a4a8bc"/><rect x="9.55" y="95.60" width="0.50" height="1.30" fill="#a4a8bc"/><rect x="10.95" y="95.60" width="0.50" height="1.30" fill="#a4a8bc"/><rect x="12.35" y="95.60" width="0.50" height="1.30" fill="#a4a8bc"/><rect x="13.75" y="95.60" width="0.50" height="1.30" fill="#a4a8bc"/><rect x="15.15" y="95.60" width="0.50" height="1.30" fill="#a4a8bc"/><rect x="16.55" y="95.60" width="0.50" height="1.30" fill="#a4a8bc"/><rect x="17.95" y="95.60" width="0.50" height="1.30" fill="#a4a8bc"/><rect x="19.35" y="95.60" width="0.50" height="1.30" fill="#a4a8bc"/><rect x="20.75" y="95.60" width="0.50" height="1.30" fill="#a4a8bc"/><rect x="22.15" y="95.60" width="0.50" height="1.30" fill="#a4a8bc"/><rect x="23.55" y="95.60" width="0.50" height="1.30" fill="#a4a8bc"/><rect x="24.95" y="95.60" width="0.50" height="1.30" fill="#a4a8bc"/><rect x="26.35" y="95.60" width="0.50" height="1.30" fill="#a4a8bc"/><rect x="27.75" y="95.60" width="0.50" height="1.30" fill="#a4a8bc"/><rect x="29.15" y="95.60" width="0.50" height="1.30" fill="#a4a8bc"/><rect x="30.55" y="95.60" width="0.50" height="1.30" fill="#a4a8bc"/><rect x="31.95" y="95.60" width="0.50" height="1.30" fill="#a4a8bc"/><rect x="33.35" y="95.60" width="0.50" height="1.30" fill="#a4a8bc"/><rect x="34.75" y="95.60" width="0.50" height="1.30" fill="#a4a8bc"/><rect x="36.15" y="95.60" width="0.50" height="1.30" fill="#a4a8bc"/><rect x="37.55" y="95.60" width="0.50" height="1.30" fill="#a4a8bc"/><rect x="38.95" y="95.60" width="0.50" height="1.30" fill="#a4a8bc"/><rect x="40.35" y="95.60" width="0.50" height="1.30" fill="#a4a8bc"/></svg>
<div class="b" style="left:21.3px;top:93.6px;width:4.4px;height:4.4px;border-radius:50%;background:#4444de;border:0.5px solid #3333c4"></div>
<div class="b" style="left:22.7px;top:95.0px;width:1.6px;height:1.6px;border-radius:50%;background:#a8aef4"></div>
<svg width="768" height="461" viewBox="0 0 768 461"><rect x="7.00" y="108.50" width="33.60" height="0.70" fill="#9a9eb2"/><rect x="6.75" y="108.80" width="0.50" height="1.30" fill="#a4a8bc"/><rect x="8.15" y="108.80" width="0.50" height="1.30" fill="#a4a8bc"/><rect x="9.55" y="108.80" width="0.50" height="1.30" fill="#a4a8bc"/><rect x="10.95" y="108.80" width="0.50" height="1.30" fill="#a4a8bc"/><rect x="12.35" y="108.80" width="0.50" height="1.30" fill="#a4a8bc"/><rect x="13.75" y="108.80" width="0.50" height="1.30" fill="#a4a8bc"/><rect x="15.15" y="108.80" width="0.50" height="1.30" fill="#a4a8bc"/><rect x="16.55" y="108.80" width="0.50" height="1.30" fill="#a4a8bc"/><rect x="17.95" y="108.80" width="0.50" height="1.30" fill="#a4a8bc"/><rect x="19.35" y="108.80" width="0.50" height="1.30" fill="#a4a8bc"/><rect x="20.75" y="108.80" width="0.50" height="1.30" fill="#a4a8bc"/><rect x="22.15" y="108.80" width="0.50" height="1.30" fill="#a4a8bc"/><rect x="23.55" y="108.80" width="0.50" height="1.30" fill="#a4a8bc"/><rect x="24.95" y="108.80" width="0.50" height="1.30" fill="#a4a8bc"/><rect x="26.35" y="108.80" width="0.50" height="1.30" fill="#a4a8bc"/><rect x="27.75" y="108.80" width="0.50" height="1.30" fill="#a4a8bc"/><rect x="29.15" y="108.80" width="0.50" height="1.30" fill="#a4a8bc"/><rect x="30.55" y="108.80" width="0.50" height="1.30" fill="#a4a8bc"/><rect x="31.95" y="108.80" width="0.50" height="1.30" fill="#a4a8bc"/><rect x="33.35" y="108.80" width="0.50" height="1.30" fill="#a4a8bc"/><rect x="34.75" y="108.80" width="0.50" height="1.30" fill="#a4a8bc"/><rect x="36.15" y="108.80" width="0.50" height="1.30" fill="#a4a8bc"/><rect x="37.55" y="108.80" width="0.50" height="1.30" fill="#a4a8bc"/><rect x="38.95" y="108.80" width="0.50" height="1.30" fill="#a4a8bc"/><rect x="40.35" y="108.80" width="0.50" height="1.30" fill="#a4a8bc"/></svg>
<div class="b" style="left:21.3px;top:106.8px;width:4.4px;height:4.4px;border-radius:50%;background:#4444de;border:0.5px solid #3333c4"></div>
<div class="b" style="left:22.7px;top:108.2px;width:1.6px;height:1.6px;border-radius:50%;background:#a8aef4"></div>
<svg width="768" height="461" viewBox="0 0 768 461"><rect x="7.20" y="90.80" width="1.90" height="0.70" fill="#222"/><rect x="37.60" y="90.80" width="2.10" height="0.70" fill="#222"/><rect x="38.30" y="90.10" width="0.70" height="2.10" fill="#222"/></svg>
<span class="t " style="left:7.20px;top:101.33px;font-size:5px;line-height:5.75px;color:#222;transform:scaleX(0.719);transform-origin:left center;">L</span>
<span class="t " style="left:37.40px;top:101.33px;font-size:5px;line-height:5.75px;color:#222;transform:scaleX(0.720);transform-origin:left center;">R</span>
<span class="t " style="left:4.00px;top:115.21px;font-size:5.2px;line-height:5.98px;color:#222;transform:scaleX(0.899);transform-origin:left center;">Mono, 44100Hz</span>
<span class="t " style="left:4.00px;top:120.61px;font-size:5.2px;line-height:5.98px;color:#222;transform:scaleX(0.947);transform-origin:left center;">32-bit float</span>
<svg width="768" height="461" viewBox="0 0 768 461"><rect x="2.65" y="127.45" width="7.30" height="6.70" fill="#e3eafa" stroke="#aeb6d0" stroke-width="0.5"/><rect x="11.05" y="127.45" width="24.90" height="6.70" fill="#e3eafa" stroke="#aeb6d0" stroke-width="0.5"/></svg>
<svg width="768" height="461" viewBox="0 0 768 461"><path d="M4.2 132 H8.4 L6.3 129.4 Z" fill="#1b1b1b"/></svg>
<span class="t " style="left:16.37px;top:127.91px;font-size:5.2px;line-height:5.98px;color:#222;transform:scaleX(0.913);transform-origin:center center;">Select</span>
<span class="t " style="left:48.97px;top:72.21px;font-size:5.2px;line-height:5.98px;color:#1c1c1c;transform:scaleX(0.913);transform-origin:right center;font-weight:bold;">1.0</span>
<span class="t " style="left:48.97px;top:85.21px;font-size:5.2px;line-height:5.98px;color:#1c1c1c;transform:scaleX(0.913);transform-origin:right center;font-weight:bold;">0.5</span>
<span class="t " style="left:48.97px;top:100.51px;font-size:5.2px;line-height:5.98px;color:#1c1c1c;transform:scaleX(0.913);transform-origin:right center;font-weight:bold;">0.0</span>
<span class="t " style="left:47.24px;top:116.01px;font-size:5.2px;line-height:5.98px;color:#1c1c1c;transform:scaleX(0.960);transform-origin:right center;font-weight:bold;">-0.5</span>
<span class="t " style="left:47.24px;top:128.61px;font-size:5.2px;line-height:5.98px;color:#1c1c1c;transform:scaleX(0.960);transform-origin:right center;font-weight:bold;">-1.0</span>
<svg width="768" height="461" viewBox="0 0 768 461"><rect x="57.00" y="88.10" width="1.20" height="0.60" fill="#555"/><rect x="57.00" y="103.30" width="1.20" height="0.60" fill="#555"/><rect x="57.00" y="118.90" width="1.20" height="0.60" fill="#555"/></svg>
</section>
<section id="waveform">
<svg width="768" height="461" viewBox="0 0 768 461"><path d="M59.0 103.2V103.7 M60.0 103.2V103.7 M61.0 103.2V103.7 M62.0 103.2V103.7 M63.0 103.2V103.7 M64.0 103.2V103.7 M65.0 103.2V103.7 M66.0 103.2V103.7 M67.0 103.2V103.7 M68.0 103.2V103.7 M69.0 103.2V103.7 M70.0 103.2V103.7 M71.0 103.2V103.7 M72.0 103.2V103.7 M73.0 103.2V103.7 M74.0 103.2V103.7 M75.0 103.2V103.7 M76.0 103.2V103.7 M77.0 103.2V103.7 M78.0 102.9V103.9 M79.0 102.7V104.2 M80.0 102.6V104.3 M81.0 103.1V104.0 M82.0 102.4V104.2 M83.0 102.5V103.8 M84.0 102.8V103.9 M85.0 102.7V104.1 M86.0 103.1V103.9 M87.0 102.9V104.3 M88.0 102.6V103.8 M89.0 102.5V103.8 M90.0 102.7V103.8 M91.0 103.1V104.3 M92.0 103.0V103.9 M93.0 102.4V104.3 M94.0 102.9V104.4 M95.0 102.7V104.2 M96.0 103.0V104.4 M97.0 102.6V104.4 M98.0 102.5V103.9 M99.0 102.8V103.8 M100.0 103.0V103.7 M101.0 102.9V104.1 M102.0 103.1V104.2 M103.0 102.9V103.9 M104.0 102.5V104.0 M105.0 102.9V104.0 M106.0 102.7V103.7 M107.0 102.6V103.7 M108.0 102.8V104.1 M109.0 103.2V104.0 M110.0 103.0V103.9 M111.0 103.2V103.7 M112.0 103.2V103.9 M113.0 103.2V103.7 M114.0 103.2V103.7 M115.0 103.2V103.7 M116.0 98.2V110.6 M117.0 98.3V108.2 M118.0 97.2V110.5 M119.0 98.0V108.8 M120.0 98.1V108.5 M121.0 102.1V105.3 M122.0 99.4V105.0 M123.0 98.3V109.3 M124.0 99.5V109.6 M125.0 100.9V107.7 M126.0 97.5V110.0 M127.0 101.4V110.6 M128.0 98.2V108.8 M129.0 101.2V106.1 M130.0 103.2V103.7 M131.0 103.2V103.7 M132.0 103.2V103.7 M133.0 103.2V103.7 M134.0 98.3V109.4 M135.0 97.1V112.3 M136.0 96.6V110.8 M137.0 98.0V110.8 M138.0 96.9V110.4 M139.0 97.9V106.0 M140.0 98.6V108.9 M141.0 99.4V107.4 M142.0 103.2V103.7 M143.0 103.2V103.7 M144.0 103.2V103.7 M145.0 103.2V103.7 M146.0 103.2V103.7 M147.0 103.2V103.7 M148.0 103.2V103.7 M149.0 99.0V109.3 M150.0 98.3V107.0 M151.0 98.4V108.1 M152.0 99.5V108.9 M153.0 100.6V107.0 M154.0 103.2V103.7 M155.0 94.8V112.0 M156.0 97.0V113.2 M157.0 99.8V105.9 M158.0 100.0V109.5 M159.0 99.0V108.8 M160.0 97.9V105.9 M161.0 101.9V110.1 M162.0 102.4V106.9 M163.0 103.2V103.7 M164.0 103.2V103.7 M165.0 103.2V103.7 M166.0 103.2V103.7 M167.0 95.3V114.2 M168.0 100.6V113.6 M169.0 96.0V113.4 M170.0 100.5V110.5 M171.0 97.6V113.9 M172.0 97.8V114.6 M173.0 98.3V109.2 M174.0 103.2V103.7 M175.0 103.2V103.7 M176.0 103.2V103.7 M177.0 103.2V103.7 M178.0 103.2V103.7 M179.0 103.2V103.7 M180.0 103.2V103.7 M181.0 91.7V115.4 M182.0 94.1V118.4 M183.0 90.7V119.7 M184.0 98.9V120.4 M185.0 87.8V115.4 M186.0 92.3V118.5 M187.0 94.1V121.2 M188.0 93.7V117.1 M189.0 94.1V114.3 M190.0 100.7V112.6 M191.0 92.8V114.4 M192.0 94.7V113.1 M193.0 93.2V114.7 M194.0 103.2V103.7 M195.0 103.2V103.7 M196.0 103.2V103.7 M197.0 91.7V119.5 M198.0 84.8V119.6 M199.0 95.8V117.0 M200.0 86.3V110.4 M201.0 95.8V117.2 M202.0 93.4V107.5 M203.0 96.1V111.5 M204.0 95.2V114.7 M205.0 94.2V107.3 M206.0 97.2V107.2 M207.0 99.9V107.9 M208.0 93.6V107.1 M209.0 96.3V115.4 M210.0 100.0V114.1 M211.0 97.6V111.4 M212.0 98.3V110.9 M213.0 103.2V103.7 M214.0 97.5V112.6 M215.0 99.6V112.0 M216.0 91.3V113.7 M217.0 96.3V114.4 M218.0 103.2V103.7 M219.0 103.2V103.7 M220.0 100.8V111.1 M221.0 92.8V111.3 M222.0 96.0V113.3 M223.0 96.7V114.3 M224.0 95.6V115.7 M225.0 94.5V112.4 M226.0 100.3V106.8 M227.0 93.1V110.7 M228.0 93.9V112.4 M229.0 100.7V106.5 M230.0 97.6V105.6 M231.0 103.2V103.7 M232.0 103.2V103.7 M233.0 103.2V103.7 M234.0 103.2V103.7 M235.0 98.9V108.4 M236.0 94.5V113.7 M237.0 97.8V115.3 M238.0 97.7V114.8 M239.0 97.0V108.6 M240.0 96.7V111.9 M241.0 97.1V109.3 M242.0 103.2V103.7 M243.0 103.2V103.7 M244.0 103.2V103.7 M245.0 103.2V103.7 M246.0 91.5V115.0 M247.0 97.9V119.4 M248.0 87.9V113.4 M249.0 87.5V113.2 M250.0 99.1V113.6 M251.0 97.8V108.7 M252.0 92.2V111.3 M253.0 99.6V113.5 M254.0 90.9V112.0 M255.0 92.7V112.7 M256.0 91.1V116.1 M257.0 91.0V112.3 M258.0 94.7V112.0 M259.0 103.2V103.7 M260.0 103.2V103.7 M261.0 103.2V103.7 M262.0 103.2V103.7 M263.0 98.6V115.9 M264.0 99.7V115.6 M265.0 94.9V117.1 M266.0 94.3V119.5 M267.0 103.2V103.7 M268.0 94.0V111.9 M269.0 92.6V114.2 M270.0 100.3V106.8 M271.0 97.0V112.9 M272.0 97.0V106.6 M273.0 93.7V113.9 M274.0 96.5V109.5 M275.0 97.4V110.8 M276.0 103.2V103.7 M277.0 103.2V103.7 M278.0 103.2V103.7 M279.0 96.1V114.7 M280.0 93.8V108.5 M281.0 95.0V114.7 M282.0 95.6V116.2 M283.0 96.2V106.0 M284.0 103.2V103.7 M285.0 93.2V113.7 M286.0 95.6V115.0 M287.0 95.5V117.4 M288.0 91.9V117.2 M289.0 92.4V113.0 M290.0 95.6V117.6 M291.0 93.9V117.7 M292.0 99.5V112.4 M293.0 98.3V110.8 M294.0 98.0V109.3 M295.0 94.2V114.1 M296.0 90.0V116.7 M297.0 95.0V108.6 M298.0 92.5V119.6 M299.0 98.8V110.9 M300.0 91.1V117.6 M301.0 88.5V114.4 M302.0 92.3V116.5 M303.0 93.4V114.4 M304.0 103.2V103.7 M305.0 92.1V111.9 M306.0 95.4V115.6 M307.0 95.8V114.3 M308.0 96.9V109.3 M309.0 100.7V109.6 M310.0 96.2V108.7 M311.0 98.8V108.8 M312.0 103.2V103.7 M313.0 103.2V103.7 M314.0 103.2V103.7 M315.0 103.2V103.7 M316.0 103.2V103.7 M317.0 103.2V103.7 M318.0 103.2V103.7 M319.0 103.2V103.7 M320.0 103.2V103.7 M321.0 103.2V103.7 M322.0 103.2V103.7 M323.0 103.2V103.7 M324.0 103.2V103.7 M325.0 103.2V103.7 M326.0 103.2V103.7 M327.0 99.5V106.0 M328.0 99.3V109.3 M329.0 98.2V107.9 M330.0 97.7V111.0 M331.0 100.3V109.1 M332.0 103.2V103.7 M333.0 97.0V106.4 M334.0 99.1V106.9 M335.0 91.4V116.4 M336.0 92.4V111.2 M337.0 99.6V112.7 M338.0 96.1V115.7 M339.0 96.4V106.4 M340.0 103.2V103.7 M341.0 103.2V103.7 M342.0 103.2V103.7 M343.0 103.2V103.7 M344.0 103.2V103.7 M345.0 96.6V114.2 M346.0 100.6V114.4 M347.0 97.2V114.1 M348.0 97.8V113.2 M349.0 95.8V111.7 M350.0 98.0V107.0 M351.0 99.5V106.0 M352.0 100.3V110.2 M353.0 103.2V103.7 M354.0 103.2V103.7 M355.0 103.2V103.7 M356.0 103.2V103.7 M357.0 103.2V103.7 M358.0 101.8V106.0 M359.0 98.3V107.2 M360.0 100.2V107.1 M361.0 98.4V106.9 M362.0 98.4V106.8 M363.0 100.1V106.5 M364.0 103.2V103.7 M365.0 99.7V106.4 M366.0 95.2V114.8 M367.0 93.8V114.9 M368.0 94.5V115.0 M369.0 97.5V111.1 M370.0 96.7V108.2 M371.0 93.6V113.7 M372.0 97.1V108.2 M373.0 94.5V107.3 M374.0 94.2V111.0 M375.0 95.4V109.7 M376.0 98.6V109.8 M377.0 98.3V107.8 M378.0 92.0V109.2 M379.0 90.7V115.8 M380.0 100.0V114.6 M381.0 94.8V108.6 M382.0 94.5V119.1 M383.0 92.7V118.3 M384.0 100.4V111.0 M385.0 103.2V103.7 M386.0 103.2V103.7 M387.0 103.2V103.7 M388.0 103.2V103.7 M389.0 103.2V103.7 M390.0 103.2V103.7 M391.0 103.2V103.7 M392.0 92.2V124.5 M393.0 97.9V119.5 M394.0 93.6V116.1 M395.0 88.5V109.7 M396.0 89.8V124.5 M397.0 90.4V117.2 M398.0 91.4V122.6 M399.0 97.8V110.0 M400.0 98.9V108.4 M401.0 94.4V106.6 M402.0 96.4V115.3 M403.0 99.5V107.0 M404.0 99.5V115.1 M405.0 103.2V103.7 M406.0 103.2V103.7 M407.0 103.2V103.7 M408.0 86.1V112.0 M409.0 84.4V116.2 M410.0 89.4V123.9 M411.0 91.1V124.3 M412.0 99.4V113.9 M413.0 103.2V103.7 M414.0 94.0V109.4 M415.0 92.2V113.7 M416.0 93.8V117.9 M417.0 94.3V117.3 M418.0 91.4V114.4 M419.0 90.4V116.5 M420.0 99.5V119.6 M421.0 91.4V118.3 M422.0 95.7V117.6 M423.0 100.0V107.3 M424.0 96.3V106.0 M425.0 103.2V103.7 M426.0 86.0V117.4 M427.0 97.8V112.7 M428.0 87.0V117.1 M429.0 103.2V103.7 M430.0 103.2V103.7 M431.0 89.1V108.3 M432.0 94.1V117.2 M433.0 89.2V117.0 M434.0 91.1V115.8 M435.0 89.2V114.2 M436.0 91.1V117.4 M437.0 91.9V115.4 M438.0 92.6V120.1 M439.0 95.1V119.5 M440.0 95.4V108.5 M441.0 95.0V110.3 M442.0 103.2V103.7 M443.0 103.2V103.7 M444.0 103.2V103.7 M445.0 103.2V103.7 M446.0 98.1V113.5 M447.0 99.3V121.4 M448.0 91.6V120.6 M449.0 89.7V109.3 M450.0 98.4V118.5 M451.0 99.3V121.5 M452.0 94.5V118.5 M453.0 97.7V111.9 M454.0 103.2V103.7 M455.0 103.2V103.7 M456.0 103.2V103.7 M457.0 100.2V114.5 M458.0 85.8V121.3 M459.0 87.6V123.2 M460.0 88.9V116.2 M461.0 90.6V109.4 M462.0 93.4V110.7 M463.0 85.5V116.7 M464.0 89.1V110.5 M465.0 97.8V110.3 M466.0 96.4V118.9 M467.0 90.8V118.9 M468.0 82.3V117.5 M469.0 87.6V114.8 M470.0 103.2V103.7 M471.0 103.2V103.7 M472.0 103.2V103.7 M473.0 91.1V108.6 M474.0 86.1V110.8 M475.0 81.5V123.6 M476.0 80.1V129.7 M477.0 88.8V116.3 M478.0 87.1V122.3 M479.0 84.2V122.3 M480.0 86.9V121.0 M481.0 87.2V119.4 M482.0 94.7V109.9 M483.0 98.7V112.1 M484.0 93.9V107.9 M485.0 98.2V109.0 M486.0 93.4V109.5 M487.0 103.2V103.7 M488.0 103.2V103.7 M489.0 103.2V103.7 M490.0 97.4V111.2 M491.0 90.9V123.9 M492.0 91.1V118.6 M493.0 87.9V121.2 M494.0 93.2V115.5 M495.0 99.1V115.4 M496.0 83.9V114.3 M497.0 95.4V117.4 M498.0 96.7V116.3 M499.0 96.8V114.0 M500.0 89.8V114.2 M501.0 89.8V120.1 M502.0 83.5V108.6 M503.0 86.3V108.8 M504.0 89.7V111.7 M505.0 95.5V112.3 M506.0 103.2V103.7 M507.0 90.6V119.2 M508.0 89.7V117.8 M509.0 92.8V116.7 M510.0 91.7V113.4 M511.0 85.6V115.3 M512.0 94.9V121.6 M513.0 86.2V115.2 M514.0 90.4V117.7 M515.0 103.2V103.7 M516.0 91.4V119.4 M517.0 93.9V115.8 M518.0 99.0V119.6 M519.0 96.5V110.3 M520.0 96.5V110.6 M521.0 96.2V109.3 M522.0 98.3V107.8 M523.0 103.2V103.7 M524.0 103.2V103.7 M525.0 103.2V103.7 M526.0 103.2V103.7 M527.0 103.2V103.7 M528.0 103.2V103.7 M529.0 103.2V103.7 M530.0 103.2V103.7 M531.0 103.2V103.7 M532.0 103.2V103.7 M533.0 103.2V103.7 M534.0 103.2V103.7 M535.0 103.2V103.7 M536.0 103.2V103.7 M537.0 103.2V103.7 M538.0 103.2V103.7 M539.0 93.5V111.6 M540.0 90.7V118.9 M541.0 89.9V113.2 M542.0 92.0V113.2 M543.0 90.7V119.2 M544.0 99.0V110.2 M545.0 95.7V112.0 M546.0 94.7V112.2 M547.0 103.2V103.7 M548.0 92.8V113.0 M549.0 93.1V113.7 M550.0 85.3V118.1 M551.0 91.5V112.3 M552.0 92.5V112.5 M553.0 88.8V113.7 M554.0 92.8V112.4 M555.0 103.2V103.7 M556.0 91.7V118.5 M557.0 99.3V112.9 M558.0 94.4V116.6 M559.0 92.0V114.1 M560.0 89.6V109.4 M561.0 92.8V117.9 M562.0 96.1V110.3 M563.0 103.2V103.7 M564.0 89.1V114.5 M565.0 90.0V117.5 M566.0 90.8V117.2 M567.0 91.0V109.5 M568.0 88.2V108.0 M569.0 93.4V115.2 M570.0 92.1V111.4 M571.0 103.2V103.7 M572.0 98.7V108.1 M573.0 95.6V112.2 M574.0 96.8V111.0 M575.0 96.9V115.5 M576.0 94.7V112.4 M577.0 97.6V112.2 M578.0 98.6V109.4 M579.0 103.2V103.7 M580.0 97.8V112.1 M581.0 92.9V108.2 M582.0 93.0V117.2 M583.0 94.2V120.4 M584.0 92.0V113.4 M585.0 90.5V117.3 M586.0 98.9V116.8 M587.0 93.0V117.9 M588.0 95.8V113.5 M589.0 101.2V106.1 M590.0 101.0V106.3 M591.0 103.2V103.7 M592.0 103.2V103.7 M593.0 103.2V103.7 M594.0 103.2V103.7 M595.0 103.2V103.7 M596.0 94.2V114.5 M597.0 98.9V119.9 M598.0 93.6V121.8 M599.0 92.2V119.5 M600.0 93.7V116.2 M601.0 99.3V109.0 M602.0 89.8V121.4 M603.0 93.2V108.5 M604.0 100.6V116.3 M605.0 101.4V106.1 M606.0 101.8V106.3 M607.0 103.2V103.7 M608.0 103.2V103.7 M609.0 103.2V103.7 M610.0 103.2V103.7 M611.0 103.2V103.7 M612.0 100.1V114.8 M613.0 89.9V119.0 M614.0 90.1V119.6 M615.0 98.2V120.0 M616.0 92.4V115.9 M617.0 89.4V118.8 M618.0 93.5V110.9 M619.0 91.3V118.1 M620.0 95.1V112.9 M621.0 100.7V113.3 M622.0 101.8V104.8 M623.0 101.8V105.3 M624.0 103.2V103.7 M625.0 103.2V103.7 M626.0 103.2V103.7 M627.0 103.2V103.7 M628.0 94.9V115.5 M629.0 89.2V118.4 M630.0 88.3V121.9 M631.0 93.0V114.3 M632.0 91.9V119.5 M633.0 87.2V114.8 M634.0 87.1V115.8 M635.0 89.8V121.6 M636.0 98.6V117.0 M637.0 96.5V107.0 M638.0 102.1V104.8 M639.0 101.4V105.1 M640.0 103.2V103.7 M641.0 103.2V103.7 M642.0 103.2V103.7 M643.0 103.2V103.7 M644.0 103.2V103.7 M645.0 86.9V118.6 M646.0 86.1V121.9 M647.0 84.5V122.6 M648.0 91.7V115.2 M649.0 85.7V123.6 M650.0 86.8V121.3 M651.0 97.8V119.3 M652.0 91.6V117.7 M653.0 92.7V113.7 M654.0 100.5V105.2 M655.0 100.8V106.3 M656.0 103.2V103.7 M657.0 103.2V103.7 M658.0 103.2V103.7 M659.0 103.2V103.7 M660.0 103.2V103.7 M661.0 103.2V103.7 M662.0 103.2V103.7" stroke="#3b3fc8" stroke-width="1.02" fill="none" opacity="0.55"/><path d="M116.0 99.2V109.2 M117.0 99.4V107.2 M118.0 98.4V109.1 M119.0 99.1V107.7 M120.0 99.2V107.5 M122.0 100.2V104.7 M123.0 99.3V108.2 M124.0 100.3V108.3 M125.0 101.4V106.8 M126.0 98.6V108.7 M127.0 101.8V109.1 M128.0 99.2V107.7 M129.0 101.6V105.5 M134.0 99.3V108.2 M135.0 98.4V110.5 M136.0 97.9V109.3 M137.0 99.1V109.3 M138.0 98.2V109.0 M139.0 99.0V105.5 M140.0 99.6V107.8 M141.0 100.2V106.6 M149.0 99.9V108.1 M150.0 99.3V106.3 M151.0 99.4V107.2 M152.0 100.3V107.8 M153.0 101.2V106.3 M155.0 96.5V110.3 M156.0 98.3V111.2 M157.0 100.5V105.4 M158.0 100.7V108.2 M159.0 99.8V107.7 M160.0 99.0V105.4 M161.0 102.2V108.8 M167.0 96.9V112.0 M168.0 101.1V111.6 M169.0 97.5V111.4 M170.0 101.1V109.1 M171.0 98.8V111.8 M172.0 98.9V112.4 M173.0 99.3V108.0 M181.0 94.1V113.0 M182.0 95.9V115.4 M183.0 93.3V116.4 M184.0 99.8V117.0 M185.0 90.9V113.0 M186.0 94.5V115.5 M187.0 96.0V117.6 M188.0 95.6V114.4 M189.0 96.0V112.1 M190.0 101.2V110.8 M191.0 95.0V112.2 M192.0 96.4V111.1 M193.0 95.2V112.4 M197.0 94.0V116.3 M198.0 88.5V116.4 M199.0 97.3V114.3 M200.0 89.7V109.0 M201.0 97.3V114.5 M202.0 95.4V106.7 M203.0 97.6V109.9 M204.0 96.8V112.4 M205.0 96.0V106.5 M206.0 98.5V106.5 M207.0 100.6V107.0 M208.0 95.5V106.4 M209.0 97.7V113.0 M210.0 100.7V111.9 M211.0 98.7V109.8 M212.0 99.4V109.4 M214.0 98.7V110.7 M215.0 100.4V110.3 M216.0 93.7V111.6 M217.0 97.7V112.2 M220.0 101.3V109.6 M221.0 94.9V109.7 M222.0 97.5V111.3 M223.0 98.0V112.1 M224.0 97.2V113.2 M225.0 96.3V110.6 M226.0 100.9V106.1 M227.0 95.1V109.2 M228.0 95.8V110.6 M229.0 101.3V105.9 M230.0 98.8V105.2 M235.0 99.8V107.4 M236.0 96.2V111.6 M237.0 98.9V112.9 M238.0 98.8V112.5 M239.0 98.2V107.5 M240.0 98.1V110.2 M241.0 98.4V108.1 M246.0 93.9V112.7 M247.0 99.0V116.2 M248.0 91.0V111.4 M249.0 90.7V111.2 M250.0 100.0V111.6 M251.0 98.9V107.7 M252.0 94.4V109.7 M253.0 100.3V111.5 M254.0 93.4V110.3 M255.0 94.9V110.9 M256.0 93.6V113.6 M257.0 93.4V110.6 M258.0 96.4V110.3 M263.0 99.5V113.4 M264.0 100.4V113.2 M265.0 96.6V114.3 M266.0 96.1V116.3 M268.0 95.9V110.2 M269.0 94.7V112.0 M270.0 100.9V106.1 M271.0 98.3V111.0 M272.0 98.3V105.9 M273.0 95.7V111.8 M274.0 97.9V108.3 M275.0 98.6V109.3 M279.0 97.5V112.5 M280.0 95.7V107.4 M281.0 96.7V112.5 M282.0 97.1V113.6 M283.0 97.7V105.5 M285.0 95.2V111.7 M286.0 97.2V112.7 M287.0 97.0V114.6 M288.0 94.2V114.4 M289.0 94.6V111.1 M290.0 97.2V114.7 M291.0 95.8V114.8 M292.0 100.3V110.6 M293.0 99.3V109.3 M294.0 99.1V108.1 M295.0 96.0V112.0 M296.0 92.7V114.0 M297.0 96.7V107.5 M298.0 94.7V116.4 M299.0 99.7V109.4 M300.0 93.5V114.7 M301.0 91.5V112.2 M302.0 94.5V113.8 M303.0 95.4V112.2 M305.0 94.4V110.2 M306.0 97.0V113.1 M307.0 97.3V112.1 M308.0 98.2V108.1 M309.0 101.2V108.3 M310.0 97.7V107.7 M311.0 99.7V107.7 M327.0 100.3V105.5 M328.0 100.2V108.1 M329.0 99.2V107.0 M330.0 98.8V109.5 M331.0 100.9V108.0 M333.0 98.3V105.8 M334.0 100.0V106.2 M335.0 93.8V113.8 M336.0 94.6V109.6 M337.0 100.3V110.8 M338.0 97.6V113.2 M339.0 97.8V105.8 M345.0 98.0V112.1 M346.0 101.2V112.2 M347.0 98.4V112.0 M348.0 98.9V111.2 M349.0 97.3V110.1 M350.0 99.1V106.3 M351.0 100.3V105.5 M352.0 100.9V108.8 M358.0 102.1V105.5 M359.0 99.3V106.4 M360.0 100.9V106.4 M361.0 99.4V106.2 M362.0 99.4V106.1 M363.0 100.8V105.9 M365.0 100.4V105.8 M366.0 96.9V112.5 M367.0 95.7V112.6 M368.0 96.3V112.7 M369.0 98.7V109.5 M370.0 98.0V107.2 M371.0 95.5V111.7 M372.0 98.4V107.3 M373.0 96.3V106.5 M374.0 96.0V109.5 M375.0 97.0V108.5 M376.0 99.5V108.5 M377.0 99.3V106.9 M378.0 94.3V108.0 M379.0 93.2V113.3 M380.0 100.7V112.3 M381.0 96.5V107.5 M382.0 96.3V116.0 M383.0 94.9V115.3 M384.0 101.0V109.4 M392.0 94.5V120.3 M393.0 99.0V116.3 M394.0 95.5V113.5 M395.0 91.5V108.4 M396.0 92.5V120.3 M397.0 93.0V114.4 M398.0 93.8V118.8 M399.0 98.9V108.7 M400.0 99.8V107.4 M401.0 96.2V105.9 M402.0 97.8V112.9 M403.0 100.3V106.3 M404.0 100.3V112.7 M408.0 89.5V110.3 M409.0 88.2V113.6 M410.0 92.2V119.8 M411.0 93.6V120.1 M412.0 100.2V111.8 M414.0 95.9V108.2 M415.0 94.4V111.7 M416.0 95.7V115.0 M417.0 96.1V114.5 M418.0 93.8V112.2 M419.0 93.0V113.9 M420.0 100.3V116.4 M421.0 93.8V115.3 M422.0 97.2V114.8 M423.0 100.7V106.5 M424.0 97.7V105.5 M426.0 89.4V114.6 M427.0 99.0V110.8 M428.0 90.3V114.4 M431.0 91.9V107.3 M432.0 96.0V114.4 M433.0 92.0V114.3 M434.0 93.5V113.3 M435.0 92.0V112.0 M436.0 93.6V114.6 M437.0 94.2V113.0 M438.0 94.7V116.8 M439.0 96.8V116.3 M440.0 97.0V107.5 M441.0 96.7V108.9 M446.0 99.2V111.4 M447.0 100.1V117.8 M448.0 94.0V117.2 M449.0 92.5V108.1 M450.0 99.4V115.5 M451.0 100.1V117.9 M452.0 96.3V115.5 M453.0 98.8V110.2 M457.0 100.9V112.3 M458.0 89.3V117.7 M459.0 90.7V119.3 M460.0 91.8V113.7 M461.0 93.2V108.2 M462.0 95.4V109.3 M463.0 89.1V114.0 M464.0 92.0V109.1 M465.0 98.9V108.9 M466.0 97.8V115.8 M467.0 93.3V115.8 M468.0 86.5V114.7 M469.0 90.7V112.5 M473.0 93.6V107.6 M474.0 89.6V109.3 M475.0 85.9V119.5 M476.0 84.7V124.5 M477.0 91.7V113.7 M478.0 90.3V118.5 M479.0 88.1V118.5 M480.0 90.2V117.5 M481.0 90.4V116.2 M482.0 96.4V108.6 M483.0 99.6V110.3 M484.0 95.8V107.0 M485.0 99.3V107.9 M486.0 95.4V108.3 M490.0 98.6V109.7 M491.0 93.4V119.8 M492.0 93.5V115.5 M493.0 91.0V117.7 M494.0 95.2V113.1 M495.0 99.9V113.0 M496.0 87.8V112.2 M497.0 97.0V114.6 M498.0 98.1V113.7 M499.0 98.1V111.9 M500.0 92.5V112.0 M501.0 92.5V116.8 M502.0 87.5V107.5 M503.0 89.7V107.7 M504.0 92.4V110.0 M505.0 97.1V110.5 M507.0 93.2V116.0 M508.0 92.5V114.9 M509.0 94.9V114.0 M510.0 94.0V111.4 M511.0 89.2V112.9 M512.0 96.6V118.0 M513.0 89.6V112.9 M514.0 93.0V114.8 M516.0 93.8V116.2 M517.0 95.8V113.4 M518.0 99.9V116.4 M519.0 97.9V108.9 M520.0 97.9V109.1 M521.0 97.6V108.1 M522.0 99.3V107.0 M539.0 95.5V110.0 M540.0 93.3V115.8 M541.0 92.6V111.2 M542.0 94.3V111.2 M543.0 93.2V116.0 M544.0 99.9V108.8 M545.0 97.2V110.3 M546.0 96.4V110.5 M548.0 94.9V111.1 M549.0 95.2V111.6 M550.0 88.9V115.1 M551.0 93.9V110.5 M552.0 94.7V110.7 M553.0 91.7V111.6 M554.0 94.9V110.6 M556.0 94.0V115.5 M557.0 100.1V111.0 M558.0 96.2V114.0 M559.0 94.3V111.9 M560.0 92.3V108.2 M561.0 94.9V115.0 M562.0 97.6V108.9 M564.0 91.9V112.2 M565.0 92.7V114.7 M566.0 93.3V114.4 M567.0 93.4V108.3 M568.0 91.2V107.1 M569.0 95.4V112.9 M570.0 94.4V109.8 M572.0 99.7V107.2 M573.0 97.2V110.4 M574.0 98.2V109.5 M575.0 98.2V113.1 M576.0 96.4V110.6 M577.0 98.8V110.4 M578.0 99.5V108.2 M580.0 99.0V110.3 M581.0 95.0V107.3 M582.0 95.1V114.4 M583.0 96.0V117.0 M584.0 94.3V111.4 M585.0 93.1V114.5 M586.0 99.8V114.1 M587.0 95.1V115.0 M588.0 97.3V111.5 M589.0 101.6V105.6 M590.0 101.5V105.8 M596.0 96.0V112.3 M597.0 99.8V116.6 M598.0 95.6V118.2 M599.0 94.4V116.3 M600.0 95.7V113.6 M601.0 100.1V107.9 M602.0 92.5V117.8 M603.0 95.3V107.5 M604.0 101.1V113.7 M605.0 101.8V105.6 M606.0 102.1V105.7 M612.0 100.8V112.5 M613.0 92.6V115.9 M614.0 92.7V116.3 M615.0 99.3V116.7 M616.0 94.6V113.4 M617.0 92.2V115.7 M618.0 95.5V109.4 M619.0 93.7V115.2 M620.0 96.7V111.0 M621.0 101.3V111.3 M622.0 102.1V104.5 M623.0 102.2V104.9 M628.0 96.6V113.1 M629.0 92.0V115.4 M630.0 91.3V118.2 M631.0 95.1V112.2 M632.0 94.2V116.3 M633.0 90.4V112.5 M634.0 90.4V113.3 M635.0 92.5V118.0 M636.0 99.6V114.2 M637.0 97.9V106.3 M639.0 101.8V104.7 M645.0 90.2V115.5 M646.0 89.6V118.2 M647.0 88.3V118.8 M648.0 94.1V112.9 M649.0 89.2V119.6 M650.0 90.1V117.7 M651.0 98.9V116.2 M652.0 94.0V114.9 M653.0 94.8V111.7 M654.0 101.1V104.9 M655.0 101.3V105.7" stroke="#3337c4" stroke-width="1.02" fill="none" opacity="0.9"/><path d="M58.6 103.4 H663.6" stroke="#5558d0" stroke-width="0.5"/></svg>
</section>
<section id="silence-finder-dialog" role="dialog" aria-label="Silence Finder">
<svg width="768" height="461" viewBox="0 0 768 461"><rect x="306.90" y="181.20" width="236.70" height="94.80" fill="#fcc61b"/><rect x="311.50" y="185.70" width="227.00" height="85.30" fill="#f0f0f0"/><rect x="311.50" y="185.70" width="227.00" height="13.40" fill="#ffffff"/></svg>
<span class="t " style="left:315.30px;top:189.05px;font-size:6px;line-height:6.90px;color:#343434;transform:scaleX(0.840);transform-origin:left center;">Silence Finder</span>
<svg width="768" height="461" viewBox="0 0 768 461"><path d="M485.8 192.6 H490.4" stroke="#222" stroke-width="0.6"/><rect x="505.6" y="190.2" width="4.6" height="4.6" fill="none" stroke="#222" stroke-width="0.6"/><path d="M526.2 190.2 L530.8 194.9 M530.8 190.2 L526.2 194.9" stroke="#222" stroke-width="0.6"/></svg>
<span class="t " style="left:316.90px;top:205.98px;font-size:5.6px;line-height:6.44px;color:#343434;transform:scaleX(0.920);transform-origin:left center;">Treat audio below this level as silence [ -dB]:</span>
<span class="t " style="left:316.50px;top:220.98px;font-size:5.6px;line-height:6.44px;color:#343434;transform:scaleX(0.959);transform-origin:left center;">Minimum duration of silence [seconds]:</span>
<span class="t " style="left:316.50px;top:235.98px;font-size:5.6px;line-height:6.44px;color:#343434;transform:scaleX(0.927);transform-origin:left center;">Label placement [seconds before silence ends]:</span>
<svg width="768" height="461" viewBox="0 0 768 461"><rect x="430.50" y="204.40" width="26.20" height="9.80" fill="#ffffff" stroke="#8c8c8c" stroke-width="0.6"/></svg>
<span class="t " style="left:433.00px;top:206.00px;font-size:5.4px;line-height:6.21px;color:#343434;transform:scaleX(0.952);transform-origin:left center;">26.0</span>
<svg width="768" height="461" viewBox="0 0 768 461"><rect x="430.50" y="219.40" width="26.20" height="9.80" fill="#ffffff" stroke="#8c8c8c" stroke-width="0.6"/></svg>
<span class="t " style="left:433.00px;top:221.00px;font-size:5.4px;line-height:6.21px;color:#343434;transform:scaleX(0.888);transform-origin:left center;">1.000</span>
<svg width="768" height="461" viewBox="0 0 768 461"><rect x="430.50" y="234.40" width="26.20" height="9.80" fill="#ffffff" stroke="#8c8c8c" stroke-width="0.6"/></svg>
<span class="t " style="left:433.00px;top:236.00px;font-size:5.4px;line-height:6.21px;color:#343434;transform:scaleX(0.888);transform-origin:left center;">0.300</span>
<svg width="768" height="461" viewBox="0 0 768 461"><rect x="465.00" y="207.20" width="59.50" height="2.40" fill="#dadada"/></svg>
<svg width="768" height="461" viewBox="0 0 768 461"><path d="M479.1 204.5 H484.1 V210.8 L481.6 213.1 L479.1 210.8 Z" fill="#0b76d8"/></svg>
<svg width="768" height="461" viewBox="0 0 768 461"><rect x="465.00" y="222.10" width="59.50" height="2.40" fill="#dadada"/></svg>
<svg width="768" height="461" viewBox="0 0 768 461"><path d="M475.0 219.4 H480.0 V225.70000000000002 L477.5 228.0 L475.0 225.70000000000002 Z" fill="#0b76d8"/></svg>
<svg width="768" height="461" viewBox="0 0 768 461"><rect x="465.00" y="237.20" width="59.50" height="2.40" fill="#dadada"/></svg>
<svg width="768" height="461" viewBox="0 0 768 461"><path d="M481.1 234.5 H486.1 V240.8 L483.6 243.1 L481.1 240.8 Z" fill="#0b76d8"/></svg>
<svg width="768" height="461" viewBox="0 0 768 461"><rect x="317.40" y="255.30" width="37.30" height="9.90" fill="#e1e1e1" stroke="#bdbdbd" stroke-width="0.6"/></svg>
<span class="t " style="left:325.93px;top:256.98px;font-size:5.6px;line-height:6.44px;color:#343434;transform:scaleX(0.959);transform-origin:center center;">Manage</span>
<svg width="768" height="461" viewBox="0 0 768 461"><rect x="394.10" y="255.30" width="37.50" height="9.90" fill="#e1e1e1" stroke="#bdbdbd" stroke-width="0.6"/></svg>
<span class="t " style="left:404.60px;top:256.98px;font-size:5.6px;line-height:6.44px;color:#343434;transform:scaleX(0.909);transform-origin:center center;">Debug</span>
<svg width="768" height="461" viewBox="0 0 768 461"><rect x="436.30" y="255.30" width="37.80" height="9.90" fill="#e1e1e1" stroke="#bdbdbd" stroke-width="0.6"/></svg>
<span class="t " style="left:451.15px;top:256.98px;font-size:5.6px;line-height:6.44px;color:#343434;transform:scaleX(0.816);transform-origin:center center;">OK</span>
<svg width="768" height="461" viewBox="0 0 768 461"><rect x="479.10" y="255.30" width="37.50" height="9.90" fill="#e1e1e1" stroke="#bdbdbd" stroke-width="0.6"/></svg>
<span class="t " style="left:489.13px;top:256.98px;font-size:5.6px;line-height:6.44px;color:#343434;transform:scaleX(0.918);transform-origin:center center;">Cancel</span>
<svg width="768" height="461" viewBox="0 0 768 461"><rect x="520.90" y="254.00" width="12.50" height="12.60" fill="#4a98f0"/><rect x="522.20" y="255.30" width="9.90" height="10.00" fill="#b4c0f2"/></svg>
<svg width="768" height="461" viewBox="0 0 768 461"><circle cx="527.2" cy="260.3" r="4.5" fill="#4d9cf2"/><rect x="522.2" y="255.3" width="9.9" height="10" fill="none" stroke="#4a98f0" stroke-width="0.5" stroke-dasharray="1 1"/></svg>
<span class="t " style="left:525.28px;top:256.70px;font-size:6.6px;line-height:7.59px;color:#d6dcfb;transform:scaleX(0.794);transform-origin:center center;font-weight:bold;">?</span>
</section>
<footer id="selection-toolbar-statusbar">
<svg width="768" height="461" viewBox="0 0 768 461"><rect x="0.00" y="417.70" width="768.00" height="7.90" fill="#f0f0f0"/><rect x="68.00" y="417.70" width="700.00" height="7.90" fill="#cdcdcd"/></svg>
<svg width="768" height="461" viewBox="0 0 768 461"><path d="M64.8 419.9 L63.2 421.6 L64.8 423.3" fill="none" stroke="#444" stroke-width="0.8"/></svg>
<svg width="768" height="461" viewBox="0 0 768 461"><rect x="0.00" y="425.50" width="768.00" height="24.80" fill="#f7f8fe"/><rect x="0.00" y="425.40" width="768.00" height="0.60" fill="#dcdfea"/></svg>
<div class="b" style="left:1.2px;top:428px;width:2.6px;height:20px;background:repeating-linear-gradient(180deg,#c4c7d4 0 0.7px,transparent 0.7px 2.4px);opacity:.55"></div>
<span class="t " style="left:7.50px;top:429.98px;font-size:5.6px;line-height:6.44px;color:#2a2a2a;transform:scaleX(0.943);transform-origin:left center;">Project Rate (Hz)</span>
<span class="t " style="left:54.00px;top:429.98px;font-size:5.6px;line-height:6.44px;color:#2a2a2a;transform:scaleX(0.983);transform-origin:left center;">Snap-To</span>
<span class="t " style="left:92.30px;top:429.98px;font-size:5.6px;line-height:6.44px;color:#2a2a2a;transform:scaleX(0.958);transform-origin:left center;">Audio Position</span>
<svg width="768" height="461" viewBox="0 0 768 461"><rect x="51.20" y="430.00" width="0.60" height="6.50" fill="#c6c9d6"/><rect x="51.20" y="441.00" width="0.60" height="6.50" fill="#c6c9d6"/><rect x="89.20" y="430.00" width="0.60" height="6.50" fill="#c6c9d6"/><rect x="89.20" y="441.00" width="0.60" height="6.50" fill="#c6c9d6"/><rect x="160.30" y="430.00" width="0.60" height="6.50" fill="#c6c9d6"/><rect x="160.30" y="441.00" width="0.60" height="6.50" fill="#c6c9d6"/><rect x="7.50" y="438.90" width="34.80" height="9.60" fill="#ffffff" stroke="#a0a0a0" stroke-width="0.6"/></svg>
<span class="t " style="left:10.60px;top:440.58px;font-size:5.6px;line-height:6.44px;color:#2a2a2a;transform:scaleX(0.989);transform-origin:left center;">44100</span>
<svg width="768" height="461" viewBox="0 0 768 461"><path d="M36.9 443.1 L38.4 444.6 L39.9 443.1" fill="none" stroke="#555" stroke-width="0.6"/></svg>
<svg width="768" height="461" viewBox="0 0 768 461"><rect x="54.30" y="439.30" width="31.40" height="9.00" fill="#e2e2e2" stroke="#c6c6c6" stroke-width="0.6"/></svg>
<span class="t " style="left:56.60px;top:440.68px;font-size:5.6px;line-height:6.44px;color:#2a2a2a;transform:scaleX(0.869);transform-origin:left center;">Off</span>
<svg width="768" height="461" viewBox="0 0 768 461"><path d="M80.3 443.2 L81.8 444.7 L83.3 443.2" fill="none" stroke="#555" stroke-width="0.6"/></svg>
<svg width="768" height="461" viewBox="0 0 768 461"><rect x="163.60" y="428.30" width="132.10" height="9.00" fill="#e2e2e2" stroke="#c6c6c6" stroke-width="0.6"/></svg>
<span class="t " style="left:165.40px;top:429.68px;font-size:5.6px;line-height:6.44px;color:#2a2a2a;transform:scaleX(0.962);transform-origin:left center;">Start and End of Selection</span>
<svg width="768" height="461" viewBox="0 0 768 461"><path d="M290.3 432.2 L291.8 433.7 L293.3 432.2" fill="none" stroke="#555" stroke-width="0.6"/></svg>
<svg width="768" height="461" viewBox="0 0 768 461"><rect x="92.25" y="439.25" width="64.50" height="8.00" fill="#a6b1d0" stroke="#9fa4b8" stroke-width="0.5"/><rect x="93.10" y="439.90" width="4.30" height="6.70" fill="#bdc8e7"/><rect x="97.55" y="439.90" width="4.30" height="6.70" fill="#bdc8e7"/><rect x="108.10" y="439.90" width="4.30" height="6.70" fill="#bdc8e7"/><rect x="112.60" y="439.90" width="4.30" height="6.70" fill="#bdc8e7"/><rect x="124.10" y="439.90" width="4.30" height="6.70" fill="#bdc8e7"/><rect x="128.45" y="439.90" width="4.30" height="6.70" fill="#bdc8e7"/><rect x="134.55" y="439.90" width="4.30" height="6.70" fill="#bdc8e7"/><rect x="139.05" y="439.90" width="4.30" height="6.70" fill="#bdc8e7"/><rect x="143.55" y="439.90" width="4.30" height="6.70" fill="#bdc8e7"/></svg>
<span class="t " style="left:93.58px;top:439.90px;font-size:6px;line-height:6.90px;color:#3838c6;transform:scaleX(0.869);transform-origin:center center;">0</span>
<span class="t " style="left:98.03px;top:439.90px;font-size:6px;line-height:6.90px;color:#3838c6;transform:scaleX(0.869);transform-origin:center center;">0</span>
<span class="t " style="left:103.34px;top:440.13px;font-size:5.6px;line-height:6.44px;color:#4046b8;transform:scaleX(0.835);transform-origin:center center;">h</span>
<span class="t " style="left:108.58px;top:439.90px;font-size:6px;line-height:6.90px;color:#3838c6;transform:scaleX(0.869);transform-origin:center center;">0</span>
<span class="t " style="left:113.08px;top:439.90px;font-size:6px;line-height:6.90px;color:#3838c6;transform:scaleX(0.869);transform-origin:center center;">0</span>
<span class="t " style="left:118.17px;top:440.13px;font-size:5.6px;line-height:6.44px;color:#4046b8;transform:scaleX(0.772);transform-origin:center center;">m</span>
<span class="t " style="left:124.58px;top:439.90px;font-size:6px;line-height:6.90px;color:#3838c6;transform:scaleX(0.869);transform-origin:center center;">0</span>
<span class="t " style="left:128.93px;top:439.90px;font-size:6px;line-height:6.90px;color:#3838c6;transform:scaleX(0.869);transform-origin:center center;">0</span>
<span class="t " style="left:132.17px;top:440.10px;font-size:6px;line-height:6.90px;color:#3838c6;transform:scaleX(0.600);transform-origin:center center;">.</span>
<span class="t " style="left:135.03px;top:439.90px;font-size:6px;line-height:6.90px;color:#3838c6;transform:scaleX(0.869);transform-origin:center center;">0</span>
<span class="t " style="left:139.53px;top:439.90px;font-size:6px;line-height:6.90px;color:#3838c6;transform:scaleX(0.869);transform-origin:center center;">0</span>
<span class="t " style="left:144.03px;top:439.90px;font-size:6px;line-height:6.90px;color:#3838c6;transform:scaleX(0.869);transform-origin:center center;">0</span>
<span class="t " style="left:149.20px;top:440.13px;font-size:5.6px;line-height:6.44px;color:#4046b8;transform:scaleX(0.857);transform-origin:center center;">s</span>
<svg width="768" height="461" viewBox="0 0 768 461"><path d="M153 442.3 H156.2 L154.6 444.5 Z" fill="#1a1a1a"/></svg>
<svg width="768" height="461" viewBox="0 0 768 461"><rect x="163.55" y="439.25" width="64.10" height="8.00" fill="#a6b1d0" stroke="#9fa4b8" stroke-width="0.5"/><rect x="164.40" y="439.90" width="4.30" height="6.70" fill="#bdc8e7"/><rect x="168.85" y="439.90" width="4.30" height="6.70" fill="#bdc8e7"/><rect x="179.40" y="439.90" width="4.30" height="6.70" fill="#bdc8e7"/><rect x="183.90" y="439.90" width="4.30" height="6.70" fill="#bdc8e7"/><rect x="195.40" y="439.90" width="4.30" height="6.70" fill="#bdc8e7"/><rect x="199.75" y="439.90" width="4.30" height="6.70" fill="#bdc8e7"/><rect x="205.85" y="439.90" width="4.30" height="6.70" fill="#bdc8e7"/><rect x="210.35" y="439.90" width="4.30" height="6.70" fill="#bdc8e7"/><rect x="214.85" y="439.90" width="4.30" height="6.70" fill="#bdc8e7"/></svg>
<span class="t " style="left:164.88px;top:439.90px;font-size:6px;line-height:6.90px;color:#3838c6;transform:scaleX(0.869);transform-origin:center center;">0</span>
<span class="t " style="left:169.33px;top:439.90px;font-size:6px;line-height:6.90px;color:#3838c6;transform:scaleX(0.869);transform-origin:center center;">0</span>
<span class="t " style="left:174.64px;top:440.13px;font-size:5.6px;line-height:6.44px;color:#4046b8;transform:scaleX(0.835);transform-origin:center center;">h</span>
<span class="t " style="left:179.88px;top:439.90px;font-size:6px;line-height:6.90px;color:#3838c6;transform:scaleX(0.869);transform-origin:center center;">0</span>
<span class="t " style="left:184.38px;top:439.90px;font-size:6px;line-height:6.90px;color:#3838c6;transform:scaleX(0.869);transform-origin:center center;">0</span>
<span class="t " style="left:189.47px;top:440.13px;font-size:5.6px;line-height:6.44px;color:#4046b8;transform:scaleX(0.772);transform-origin:center center;">m</span>
<span class="t " style="left:195.88px;top:439.90px;font-size:6px;line-height:6.90px;color:#3838c6;transform:scaleX(0.869);transform-origin:center center;">0</span>
<span class="t " style="left:200.23px;top:439.90px;font-size:6px;line-height:6.90px;color:#3838c6;transform:scaleX(0.869);transform-origin:center center;">0</span>
<span class="t " style="left:203.47px;top:440.10px;font-size:6px;line-height:6.90px;color:#3838c6;transform:scaleX(0.600);transform-origin:center center;">.</span>
<span class="t " style="left:206.33px;top:439.90px;font-size:6px;line-height:6.90px;color:#3838c6;transform:scaleX(0.869);transform-origin:center center;">0</span>
<span class="t " style="left:210.83px;top:439.90px;font-size:6px;line-height:6.90px;color:#3838c6;transform:scaleX(0.869);transform-origin:center center;">0</span>
<span class="t " style="left:215.33px;top:439.90px;font-size:6px;line-height:6.90px;color:#3838c6;transform:scaleX(0.869);transform-origin:center center;">0</span>
<span class="t " style="left:220.50px;top:440.13px;font-size:5.6px;line-height:6.44px;color:#4046b8;transform:scaleX(0.857);transform-origin:center center;">s</span>
<svg width="768" height="461" viewBox="0 0 768 461"><path d="M224.3 442.3 H227.5 L225.9 444.5 Z" fill="#1a1a1a"/></svg>
<svg width="768" height="461" viewBox="0 0 768 461"><rect x="231.65" y="439.25" width="64.10" height="8.00" fill="#a6b1d0" stroke="#9fa4b8" stroke-width="0.5"/><rect x="232.50" y="439.90" width="4.30" height="6.70" fill="#bdc8e7"/><rect x="236.95" y="439.90" width="4.30" height="6.70" fill="#bdc8e7"/><rect x="247.50" y="439.90" width="4.30" height="6.70" fill="#bdc8e7"/><rect x="252.00" y="439.90" width="4.30" height="6.70" fill="#bdc8e7"/><rect x="263.50" y="439.90" width="4.30" height="6.70" fill="#bdc8e7"/><rect x="267.85" y="439.90" width="4.30" height="6.70" fill="#bdc8e7"/><rect x="273.95" y="439.90" width="4.30" height="6.70" fill="#bdc8e7"/><rect x="278.45" y="439.90" width="4.30" height="6.70" fill="#bdc8e7"/><rect x="282.95" y="439.90" width="4.30" height="6.70" fill="#bdc8e7"/></svg>
<span class="t " style="left:232.98px;top:439.90px;font-size:6px;line-height:6.90px;color:#3838c6;transform:scaleX(0.869);transform-origin:center center;">0</span>
<span class="t " style="left:237.43px;top:439.90px;font-size:6px;line-height:6.90px;color:#3838c6;transform:scaleX(0.869);transform-origin:center center;">0</span>
<span class="t " style="left:242.74px;top:440.13px;font-size:5.6px;line-height:6.44px;color:#4046b8;transform:scaleX(0.835);transform-origin:center center;">h</span>
<span class="t " style="left:247.98px;top:439.90px;font-size:6px;line-height:6.90px;color:#3838c6;transform:scaleX(0.869);transform-origin:center center;">0</span>
<span class="t " style="left:252.48px;top:439.90px;font-size:6px;line-height:6.90px;color:#3838c6;transform:scaleX(0.869);transform-origin:center center;">3</span>
<span class="t " style="left:257.57px;top:440.13px;font-size:5.6px;line-height:6.44px;color:#4046b8;transform:scaleX(0.772);transform-origin:center center;">m</span>
<span class="t " style="left:263.98px;top:439.90px;font-size:6px;line-height:6.90px;color:#3838c6;transform:scaleX(0.869);transform-origin:center center;">5</span>
<span class="t " style="left:268.33px;top:439.90px;font-size:6px;line-height:6.90px;color:#3838c6;transform:scaleX(0.869);transform-origin:center center;">8</span>
<span class="t " style="left:271.57px;top:440.10px;font-size:6px;line-height:6.90px;color:#3838c6;transform:scaleX(0.600);transform-origin:center center;">.</span>
<span class="t " style="left:274.43px;top:439.90px;font-size:6px;line-height:6.90px;color:#3838c6;transform:scaleX(0.869);transform-origin:center center;">7</span>
<span class="t " style="left:278.93px;top:439.90px;font-size:6px;line-height:6.90px;color:#3838c6;transform:scaleX(0.869);transform-origin:center center;">2</span>
<span class="t " style="left:283.43px;top:439.90px;font-size:6px;line-height:6.90px;color:#3838c6;transform:scaleX(0.869);transform-origin:center center;">4</span>
<span class="t " style="left:288.60px;top:440.13px;font-size:5.6px;line-height:6.44px;color:#4046b8;transform:scaleX(0.857);transform-origin:center center;">s</span>
<svg width="768" height="461" viewBox="0 0 768 461"><path d="M292.4 442.3 H295.6 L294.0 444.5 Z" fill="#1a1a1a"/></svg>
<svg width="768" height="461" viewBox="0 0 768 461"><rect x="0.00" y="450.20" width="768.00" height="10.80" fill="#f0f0f0"/><rect x="0.00" y="450.10" width="768.00" height="0.60" fill="#d9d9d9"/><rect x="80.00" y="451.40" width="0.60" height="9.00" fill="#d0d0d0"/></svg>
<span class="t " style="left:6.00px;top:453.18px;font-size:5.6px;line-height:6.44px;color:#2a2a2a;transform:scaleX(0.955);transform-origin:left center;">Stopped.</span>
<span class="t " style="left:82.20px;top:453.18px;font-size:5.6px;line-height:6.44px;color:#2a2a2a;transform:scaleX(0.939);transform-origin:left center;">Click and drag to select audio</span>
</footer>
</div></body></html>
